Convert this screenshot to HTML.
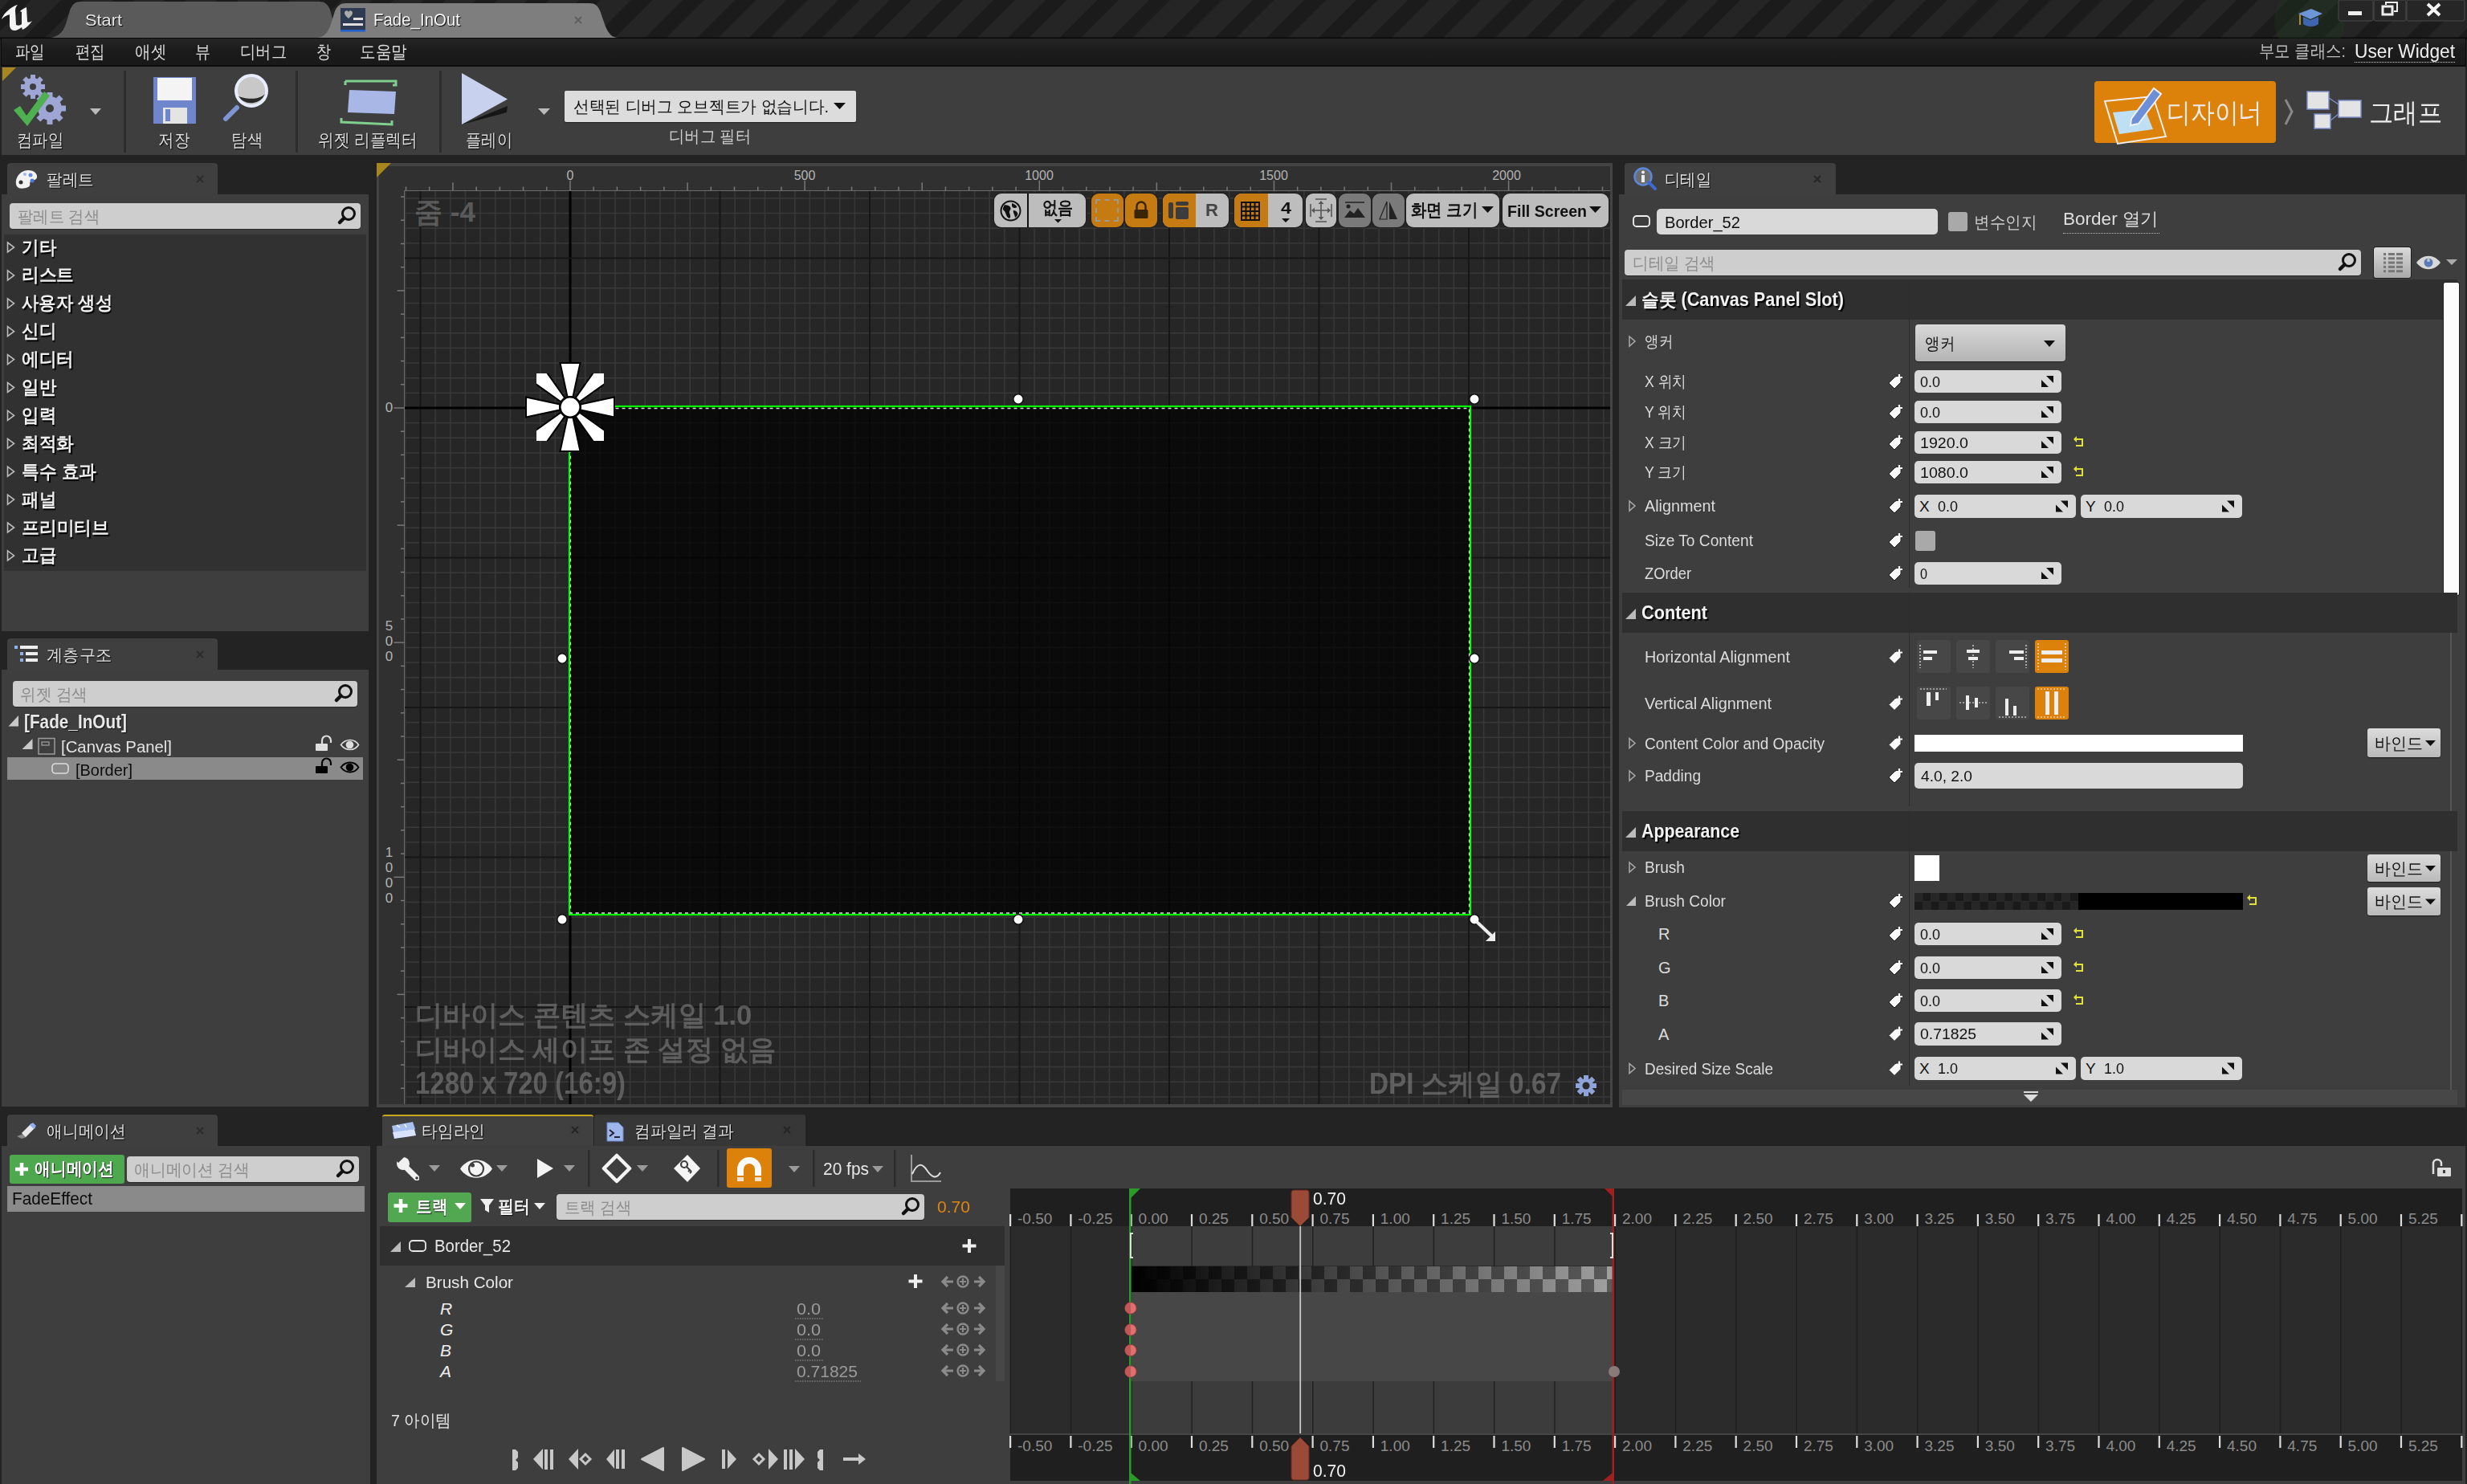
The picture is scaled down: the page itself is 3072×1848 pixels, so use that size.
<!DOCTYPE html><html><head><meta charset="utf-8"><style>
*{margin:0;padding:0;box-sizing:border-box}
html,body{width:3072px;height:1848px;overflow:hidden;background:#232323;font-family:"Liberation Sans",sans-serif}
body>div{position:absolute}
.t{position:absolute;white-space:nowrap}
svg{position:absolute;overflow:visible}
</style></head><body>
<svg style="left:0;top:0" width="3072" height="48"><defs><pattern id="st" width="45.6" height="60" patternUnits="userSpaceOnUse" patternTransform="translate(12 0) rotate(45)"><rect width="45.6" height="60" fill="#252525"/><rect width="19" height="60" fill="#1b1b1b"/></pattern></defs><rect width="3072" height="48" fill="url(#st)"/><rect y="46.5" width="3072" height="2" fill="#080808"/></svg>
<svg style="left:0;top:0" width="3072" height="48"><circle cx="2876" cy="26" r="44" fill="#1f3a1f" opacity="0.35"/><path d="M62 47C72 46 78 41 82 30L87 13C90 5 94 2 101 2L398 2C404 2 408 5 411 12L420 47Z" fill="#5a5a5a"/><path d="M394 47C402 47 407 42 411 33L417 14C420 7 424 4 431 4L734 4C741 4 744 7 747 13L754 33C758 42 762 47 770 47Z" fill="#7e7e7e"/><path d="M17 8C10 12 4 18 2 24C6 20 9 19 12 18L12 31C12 35 14 38 18 38C21 38 24 36 27 34L28 37C32 35 37 31 40 26C37 28 35 28 34 27L33 9C30 10 27 12 25 14L27 15L27 30C25 32 22 32 20 31L19 13C19 10 20 8 22 6C20 6 19 7 17 8Z" fill="#f4f4f4"/><rect x="424" y="10" width="31" height="29" fill="#2d3a52"/><rect x="424" y="37" width="31" height="2.5" fill="#1f5fd0"/><path d="M429 16c0-3 4-4 5-1c1-3 5-2 5 1c0 3-3 5-5 7c-2-2-5-4-5-7z" fill="#aaa"/><rect x="440" y="22" width="12" height="3" fill="#ddd"/><rect x="427" y="29" width="25" height="3" fill="#ddd"/><path d="M716 21l8 8M724 21l-8 8" stroke="#606060" stroke-width="2"/><path d="M2862 17l16-6 14 6-15 7z" fill="#6d95d8"/><path d="M2868 21v9c5 4 14 4 19 0v-9l-10 4z" fill="#3e66b0"/><path d="M2864 18v13" stroke="#d9a441" stroke-width="1.5"/><rect x="2912" y="0" width="43" height="26" rx="2" fill="#262626" stroke="#4a4a4a"/><rect x="2924" y="14" width="17" height="5" fill="#eee"/><rect x="2956" y="0" width="40" height="26" rx="2" fill="#262626" stroke="#4a4a4a"/><rect x="2967" y="8" width="12" height="10" fill="none" stroke="#eee" stroke-width="3"/><path d="M2971 6V3h14v11h-4" fill="none" stroke="#eee" stroke-width="2"/><rect x="2997" y="0" width="72" height="26" rx="2" fill="#262626" stroke="#4a4a4a"/><path d="M3023 5l15 14M3038 5l-15 14" stroke="#f4f4f4" stroke-width="4"/></svg>
<div id="t1" class="t" style="left:106px;top:13.5px;height:21px;line-height:21px;font-size:21px;color:#e6e6e6;font-weight:normal;transform:scaleX(1.0370);transform-origin:0 50%;text-shadow:1px 1px 1px #000">Start</div>
<div id="t2" class="t" style="left:465px;top:14.0px;height:22px;line-height:22px;font-size:22px;color:#f4f4f4;font-weight:normal;transform:scaleX(0.9295);transform-origin:0 50%;text-shadow:1px 1px 1px #000">Fade_InOut</div>
<div style="left:1px;top:48px;width:3070px;height:35px;background:linear-gradient(#252525,#1b1b1b 45%,#191919);border:1px solid #0c0c0c;border-top:0;border-bottom:2px solid #0c0c0c"></div>
<div id="t3" class="t" style="left:19px;top:54.0px;height:22px;line-height:22px;font-size:22px;color:#dcdcdc;font-weight:normal;transform:scaleX(0.8409);transform-origin:0 50%;">파일</div>
<div id="t4" class="t" style="left:94px;top:54.0px;height:22px;line-height:22px;font-size:22px;color:#dcdcdc;font-weight:normal;transform:scaleX(0.8409);transform-origin:0 50%;">편집</div>
<div id="t5" class="t" style="left:168px;top:54.0px;height:22px;line-height:22px;font-size:22px;color:#dcdcdc;font-weight:normal;transform:scaleX(0.8864);transform-origin:0 50%;">애셋</div>
<div id="t6" class="t" style="left:243px;top:54.0px;height:22px;line-height:22px;font-size:22px;color:#dcdcdc;font-weight:normal;transform:scaleX(0.8636);transform-origin:0 50%;">뷰</div>
<div id="t7" class="t" style="left:299px;top:54.0px;height:22px;line-height:22px;font-size:22px;color:#dcdcdc;font-weight:normal;transform:scaleX(0.8788);transform-origin:0 50%;">디버그</div>
<div id="t8" class="t" style="left:394px;top:54.0px;height:22px;line-height:22px;font-size:22px;color:#dcdcdc;font-weight:normal;transform:scaleX(0.8182);transform-origin:0 50%;">창</div>
<div id="t9" class="t" style="left:448px;top:54.0px;height:22px;line-height:22px;font-size:22px;color:#dcdcdc;font-weight:normal;transform:scaleX(0.8939);transform-origin:0 50%;">도움말</div>
<div id="t10" class="t" style="left:2813px;top:53.0px;height:22px;line-height:22px;font-size:22px;color:#bdbdbd;font-weight:normal;transform:scaleX(0.8835);transform-origin:0 50%;">부모 클래스:</div>
<div id="t11" class="t" style="left:2932px;top:52.5px;height:23px;line-height:23px;font-size:23px;color:#f0f0f0;font-weight:normal;transform:scaleX(0.9878);transform-origin:0 50%;">User Widget</div>
<div style="left:2932px;top:77px;width:125px;height:0;border-top:1.5px dotted #ccc"></div>
<div style="left:2px;top:83px;width:3068px;height:110px;background:#3e3e3e"></div>
<svg style="left:0;top:0" width="1" height="1"><path d="M3 84h17l-17 17z" fill="#a8861e"/><rect x="154" y="88" width="3" height="102" fill="#2c2c2c"/><rect x="368" y="88" width="3" height="102" fill="#2c2c2c"/><rect x="547" y="88" width="3" height="102" fill="#2c2c2c"/><g fill="#9ea6d6"><circle cx="41" cy="108" r="11"/><rect x="38" y="93" width="6" height="6" transform="rotate(0 41 108)"/><rect x="38" y="93" width="6" height="6" transform="rotate(45 41 108)"/><rect x="38" y="93" width="6" height="6" transform="rotate(90 41 108)"/><rect x="38" y="93" width="6" height="6" transform="rotate(135 41 108)"/><rect x="38" y="93" width="6" height="6" transform="rotate(180 41 108)"/><rect x="38" y="93" width="6" height="6" transform="rotate(225 41 108)"/><rect x="38" y="93" width="6" height="6" transform="rotate(270 41 108)"/><rect x="38" y="93" width="6" height="6" transform="rotate(315 41 108)"/><circle cx="41" cy="108" r="4" fill="#3e3e3e"/><circle cx="62" cy="135" r="15"/><rect x="58.5" y="115" width="7" height="7" transform="rotate(0 62 135)"/><rect x="58.5" y="115" width="7" height="7" transform="rotate(45 62 135)"/><rect x="58.5" y="115" width="7" height="7" transform="rotate(90 62 135)"/><rect x="58.5" y="115" width="7" height="7" transform="rotate(135 62 135)"/><rect x="58.5" y="115" width="7" height="7" transform="rotate(180 62 135)"/><rect x="58.5" y="115" width="7" height="7" transform="rotate(225 62 135)"/><rect x="58.5" y="115" width="7" height="7" transform="rotate(270 62 135)"/><rect x="58.5" y="115" width="7" height="7" transform="rotate(315 62 135)"/><circle cx="62" cy="135" r="5" fill="#3e3e3e"/></g><path d="M17 137l8-5 8 12 22-30 7 5-28 38z" fill="#4fb04f"/><path d="M112 135h14l-7 8z" fill="#bbb"/><path d="M191 96h53v58h-53z" fill="#6f86cc"/><rect x="196" y="97" width="43" height="28" fill="#f4f4f4"/><rect x="203" y="134" width="30" height="20" fill="#e4e4e4"/><rect x="206" y="136" width="6" height="15" fill="#6f86cc"/><path d="M281 148l14-14" stroke="#7d95d4" stroke-width="6" stroke-linecap="round"/><circle cx="313" cy="113" r="19" fill="#c8c8c8" stroke="#e8ecff" stroke-width="4"/><path d="M297 120a19 19 0 0 0 33 -3c-6 6-18 8-33 3z" fill="#2a2a2a"/><path d="M430 101h63v5h-4M430 101v5" fill="none" stroke="#7fcf8f" stroke-width="3"/><path d="M425 147v5l63 3v-5" fill="none" stroke="#7fcf8f" stroke-width="3"/><path d="M435 112l58 2-2 28-58-2z" fill="#a9b7e6"/><path d="M575 91L632 123.5 575 155z" fill="#c8d2ee"/><path d="M575 155l57-23-1 8z" fill="#161616"/><path d="M670 135h15l-7.5 8z" fill="#bbb"/></svg>
<div id="t12" class="t" style="left:21px;top:164.0px;height:22px;line-height:22px;font-size:22px;color:#dedede;font-weight:normal;transform:scaleX(0.8788);transform-origin:0 50%;text-shadow:1px 1px 1px #000">컴파일</div>
<div id="t13" class="t" style="left:197px;top:164.0px;height:22px;line-height:22px;font-size:22px;color:#dedede;font-weight:normal;transform:scaleX(0.8864);transform-origin:0 50%;text-shadow:1px 1px 1px #000">저장</div>
<div id="t14" class="t" style="left:288px;top:164.0px;height:22px;line-height:22px;font-size:22px;color:#dedede;font-weight:normal;transform:scaleX(0.8864);transform-origin:0 50%;text-shadow:1px 1px 1px #000">탐색</div>
<div id="t15" class="t" style="left:396px;top:164.0px;height:22px;line-height:22px;font-size:22px;color:#dedede;font-weight:normal;transform:scaleX(0.8977);transform-origin:0 50%;text-shadow:1px 1px 1px #000">위젯 리플렉터</div>
<div id="t16" class="t" style="left:580px;top:164.0px;height:22px;line-height:22px;font-size:22px;color:#dedede;font-weight:normal;transform:scaleX(0.8788);transform-origin:0 50%;text-shadow:1px 1px 1px #000">플레이</div>
<div style="left:703px;top:113px;width:363px;height:39px;background:#dcdcdc;border-radius:2px;box-shadow:0 1px 1px #222"></div>
<div id="t17" class="t" style="left:714px;top:121.5px;height:21px;line-height:21px;font-size:21px;color:#111;font-weight:normal;transform:scaleX(0.9399);transform-origin:0 50%;">선택된 디버그 오브젝트가 없습니다.</div>
<svg style="left:1038px;top:128px" width="15" height="9"><path d="M0 0h15L7.5 8z" fill="#111"/></svg>
<div id="t18" class="t" style="left:833px;top:158.5px;height:21px;line-height:21px;font-size:21px;color:#cfcfcf;font-weight:normal;transform:scaleX(0.9202);transform-origin:0 50%;">디버그 필터</div>
<div style="left:2608px;top:101px;width:226px;height:77px;background:#dc820b;border-radius:4px"></div>
<svg style="left:0;top:0" width="1" height="1"><path d="M2621 126l60-6 16 50-60 9z" fill="none" stroke="#eee" stroke-width="2"/><path d="M2631 140l40-4 10 25-42 6z" fill="#bfe0f4"/><path d="M2654 148l28-38 9 7-28 37-10 2z" fill="#6d8fd8" stroke="#f0f0f0" stroke-width="2"/><path d="M2846 124l8 15-8 16" fill="none" stroke="#888" stroke-width="3"/><rect x="2873" y="114" width="27" height="22" fill="#e4e4e4" stroke="#7d8fc8" stroke-width="1.5"/><rect x="2912" y="125" width="28" height="21" fill="#e4e4e4" stroke="#7d8fc8" stroke-width="1.5"/><rect x="2882" y="142" width="20" height="18" fill="#e4e4e4" stroke="#7d8fc8" stroke-width="1.5"/><path d="M2900 122l12 8M2902 150l10-8" stroke="#7d8fc8" stroke-width="1.5"/></svg>
<div id="t19" class="t" style="left:2698px;top:123.0px;height:34px;line-height:34px;font-size:34px;color:#ececec;font-weight:normal;transform:scaleX(0.8750);transform-origin:0 50%;">디자이너</div>
<div id="t20" class="t" style="left:2950px;top:123.0px;height:34px;line-height:34px;font-size:34px;color:#ececec;font-weight:normal;transform:scaleX(0.8922);transform-origin:0 50%;">그래프</div>
<div style="left:9px;top:203px;width:262px;height:39px;background:#3f3f3f;border-radius:4px 4px 0 0"></div>
<svg style="left:18px;top:210px" width="30" height="26"><path d="M3 22C-1 14 6 2 17 2c8 0 12 5 11 9-1 4-6 3-8 5s1 5-3 7c-5 2-11 3-14-1z" fill="#f2f2f2"/><circle cx="20" cy="8" r="2.5" fill="#6a8fe0"/><circle cx="13" cy="7" r="2" fill="#9fb7ef"/><circle cx="22" cy="15" r="2.5" fill="#4a78d8"/><circle cx="8" cy="17" r="2.5" fill="#333"/></svg>
<div id="t21" class="t" style="left:58px;top:212.5px;height:21px;line-height:21px;font-size:21px;color:#e0e0e0;font-weight:normal;transform:scaleX(0.9365);transform-origin:0 50%;text-shadow:1px 1px 1px #000">팔레트</div>
<svg style="left:244px;top:218px" width="10" height="10"><path d="M1 1l8 8M9 1L1 9" stroke="#2c2c2c" stroke-width="2"/></svg>
<div style="left:2px;top:242px;width:457px;height:544px;background:#3e3e3e"></div>
<div style="left:12px;top:253px;width:437px;height:32px;background:#cecece;border-radius:4px;box-shadow:0 1px 0 #2a2a2a"></div>
<div id="t22" class="t" style="left:22px;top:258.5px;height:21px;line-height:21px;font-size:21px;color:#8d8d8d;font-weight:normal;transform:scaleX(0.9202);transform-origin:0 50%;">팔레트 검색</div>
<svg style="left:419px;top:256.0px" width="26" height="26"><circle cx="15" cy="10" r="7.5" fill="none" stroke="#111" stroke-width="3"/><path d="M9.5 15.5L4 21" stroke="#111" stroke-width="4.5" stroke-linecap="round"/></svg>
<div style="left:5px;top:292px;width:451px;height:419px;background:#313131"></div>
<div id="t23" class="t" style="left:27px;top:296.5px;height:23px;line-height:23px;font-size:23px;color:#f0f0f0;font-weight:bold;transform:scaleX(0.9348);transform-origin:0 50%;text-shadow:2px 2px 1px #000">기타</div>
<div id="t24" class="t" style="left:27px;top:331.4px;height:23px;line-height:23px;font-size:23px;color:#f0f0f0;font-weight:bold;transform:scaleX(0.9420);transform-origin:0 50%;text-shadow:2px 2px 1px #000">리스트</div>
<div id="t25" class="t" style="left:27px;top:366.3px;height:23px;line-height:23px;font-size:23px;color:#f0f0f0;font-weight:bold;transform:scaleX(0.9309);transform-origin:0 50%;text-shadow:2px 2px 1px #000">사용자 생성</div>
<div id="t26" class="t" style="left:27px;top:401.2px;height:23px;line-height:23px;font-size:23px;color:#f0f0f0;font-weight:bold;transform:scaleX(0.9348);transform-origin:0 50%;text-shadow:2px 2px 1px #000">신디</div>
<div id="t27" class="t" style="left:27px;top:436.1px;height:23px;line-height:23px;font-size:23px;color:#f0f0f0;font-weight:bold;transform:scaleX(0.9420);transform-origin:0 50%;text-shadow:2px 2px 1px #000">에디터</div>
<div id="t28" class="t" style="left:27px;top:471.0px;height:23px;line-height:23px;font-size:23px;color:#f0f0f0;font-weight:bold;transform:scaleX(0.9348);transform-origin:0 50%;text-shadow:2px 2px 1px #000">일반</div>
<div id="t29" class="t" style="left:27px;top:505.9px;height:23px;line-height:23px;font-size:23px;color:#f0f0f0;font-weight:bold;transform:scaleX(0.9348);transform-origin:0 50%;text-shadow:2px 2px 1px #000">입력</div>
<div id="t30" class="t" style="left:27px;top:540.8px;height:23px;line-height:23px;font-size:23px;color:#f0f0f0;font-weight:bold;transform:scaleX(0.9420);transform-origin:0 50%;text-shadow:2px 2px 1px #000">최적화</div>
<div id="t31" class="t" style="left:27px;top:575.7px;height:23px;line-height:23px;font-size:23px;color:#f0f0f0;font-weight:bold;transform:scaleX(0.9452);transform-origin:0 50%;text-shadow:2px 2px 1px #000">특수 효과</div>
<div id="t32" class="t" style="left:27px;top:610.6px;height:23px;line-height:23px;font-size:23px;color:#f0f0f0;font-weight:bold;transform:scaleX(0.9348);transform-origin:0 50%;text-shadow:2px 2px 1px #000">패널</div>
<div id="t33" class="t" style="left:27px;top:645.5px;height:23px;line-height:23px;font-size:23px;color:#f0f0f0;font-weight:bold;transform:scaleX(0.9478);transform-origin:0 50%;text-shadow:2px 2px 1px #000">프리미티브</div>
<div id="t34" class="t" style="left:27px;top:680.4px;height:23px;line-height:23px;font-size:23px;color:#f0f0f0;font-weight:bold;transform:scaleX(0.9348);transform-origin:0 50%;text-shadow:2px 2px 1px #000">고급</div>
<svg style="left:0;top:0" width="1" height="1"><path d="M9.5 302.0L17.5 308.0L9.5 314.0Z" fill="none" stroke="#bbb" stroke-width="1.6"/><path d="M9.5 336.9L17.5 342.9L9.5 348.9Z" fill="none" stroke="#bbb" stroke-width="1.6"/><path d="M9.5 371.8L17.5 377.8L9.5 383.8Z" fill="none" stroke="#bbb" stroke-width="1.6"/><path d="M9.5 406.7L17.5 412.7L9.5 418.7Z" fill="none" stroke="#bbb" stroke-width="1.6"/><path d="M9.5 441.6L17.5 447.6L9.5 453.6Z" fill="none" stroke="#bbb" stroke-width="1.6"/><path d="M9.5 476.5L17.5 482.5L9.5 488.5Z" fill="none" stroke="#bbb" stroke-width="1.6"/><path d="M9.5 511.4L17.5 517.4L9.5 523.4Z" fill="none" stroke="#bbb" stroke-width="1.6"/><path d="M9.5 546.3L17.5 552.3L9.5 558.3Z" fill="none" stroke="#bbb" stroke-width="1.6"/><path d="M9.5 581.2L17.5 587.2L9.5 593.2Z" fill="none" stroke="#bbb" stroke-width="1.6"/><path d="M9.5 616.1L17.5 622.1L9.5 628.1Z" fill="none" stroke="#bbb" stroke-width="1.6"/><path d="M9.5 651.0L17.5 657.0L9.5 663.0Z" fill="none" stroke="#bbb" stroke-width="1.6"/><path d="M9.5 685.9L17.5 691.9L9.5 697.9Z" fill="none" stroke="#bbb" stroke-width="1.6"/></svg>
<div style="left:9px;top:795px;width:262px;height:39px;background:#3f3f3f;border-radius:4px 4px 0 0"></div>
<svg style="left:18px;top:804px" width="30" height="22"><rect x="0" y="0" width="4" height="4" fill="#8fb0f0"/><rect x="7" y="0" width="22" height="4" fill="#eee"/><rect x="7" y="8" width="4" height="4" fill="#8fb0f0"/><rect x="14" y="8" width="15" height="4" fill="#eee"/><rect x="7" y="16" width="4" height="4" fill="#8fb0f0"/><rect x="14" y="16" width="15" height="4" fill="#eee"/></svg>
<div id="t35" class="t" style="left:58px;top:804.5px;height:21px;line-height:21px;font-size:21px;color:#e0e0e0;font-weight:normal;transform:scaleX(0.9643);transform-origin:0 50%;text-shadow:1px 1px 1px #000">계층구조</div>
<svg style="left:244px;top:810px" width="10" height="10"><path d="M1 1l8 8M9 1L1 9" stroke="#2c2c2c" stroke-width="2"/></svg>
<div style="left:2px;top:834px;width:457px;height:544px;background:#3e3e3e"></div>
<div style="left:16px;top:848px;width:429px;height:32px;background:#cecece;border-radius:4px;box-shadow:0 1px 0 #2a2a2a"></div>
<div id="t36" class="t" style="left:25px;top:853.5px;height:21px;line-height:21px;font-size:21px;color:#8d8d8d;font-weight:normal;transform:scaleX(0.9350);transform-origin:0 50%;">위젯 검색</div>
<svg style="left:415px;top:851.0px" width="26" height="26"><circle cx="15" cy="10" r="7.5" fill="none" stroke="#111" stroke-width="3"/><path d="M9.5 15.5L4 21" stroke="#111" stroke-width="4.5" stroke-linecap="round"/></svg>
<div style="left:9px;top:943px;width:443px;height:28px;background:#8a8a8a"></div>
<svg style="left:0;top:0" width="1" height="1"><path d="M10.5 904.5L23 891V904.5Z" fill="#c8c8c8"/><path d="M27.5 933L40.5 920V933Z" fill="#c8c8c8"/><rect x="48" y="919.5" width="20" height="19.5" fill="none" stroke="#9a9a9a" stroke-width="1.5"/><rect x="52" y="924" width="9" height="4" fill="none" stroke="#9a9a9a" stroke-width="1.3"/><rect x="65" y="951" width="20" height="12" rx="4" fill="none" stroke="#dcdcdc" stroke-width="1.6"/><rect x="393" y="926" width="15" height="9" rx="1" fill="#dedede"/><path d="M401 926v-4a5.5 5.5 0 0 1 11 0v3" fill="none" stroke="#dedede" stroke-width="2.2"/><path d="M424.5 927.5c6-8 17-8 22 0c-5 8-16 8-22 0z" fill="none" stroke="#dedede" stroke-width="1.6"/><circle cx="435.5" cy="927.5" r="4.8" fill="#dedede"/><rect x="393" y="954" width="15" height="9" rx="1" fill="#000"/><path d="M401 954v-4a5.5 5.5 0 0 1 11 0v3" fill="none" stroke="#000" stroke-width="2.2"/><path d="M424.5 955.5c6-8 17-8 22 0c-5 8-16 8-22 0z" fill="none" stroke="#000" stroke-width="1.8"/><circle cx="435.5" cy="955.5" r="4.8" fill="#000"/></svg>
<div id="t37" class="t" style="left:30px;top:887.5px;height:23px;line-height:23px;font-size:23px;color:#e8e8e8;font-weight:bold;transform:scaleX(0.9024);transform-origin:0 50%;text-shadow:1px 1px 1px #111">[Fade_InOut]</div>
<div id="t38" class="t" style="left:76px;top:918.5px;height:21px;line-height:21px;font-size:21px;color:#e4e4e4;font-weight:normal;transform:scaleX(0.9690);transform-origin:0 50%;">[Canvas Panel]</div>
<div id="t39" class="t" style="left:94px;top:947.5px;height:21px;line-height:21px;font-size:21px;color:#0c0c0c;font-weight:normal;transform:scaleX(0.9504);transform-origin:0 50%;">[Border]</div>
<div style="left:9px;top:1388px;width:262px;height:39px;background:#3f3f3f;border-radius:4px 4px 0 0"></div>
<svg style="left:18px;top:1396px" width="30" height="24"><path d="M3 19l8-3 4 4-6 2z" fill="#888"/><path d="M9 15l12-12 5 5-12 12z" fill="#e8e8e8"/><path d="M19 5l4-3 4 4-3 4z" fill="#8fb0f0"/></svg>
<div id="t40" class="t" style="left:58px;top:1397.5px;height:21px;line-height:21px;font-size:21px;color:#e0e0e0;font-weight:normal;transform:scaleX(0.9429);transform-origin:0 50%;text-shadow:1px 1px 1px #000">애니메이션</div>
<svg style="left:244px;top:1403px" width="10" height="10"><path d="M1 1l8 8M9 1L1 9" stroke="#2c2c2c" stroke-width="2"/></svg>
<div style="left:2px;top:1427px;width:459px;height:421px;background:#3e3e3e"></div>
<div style="left:12px;top:1438px;width:143px;height:36px;background:#4ea84e;border-radius:3px"></div>
<svg style="left:18px;top:1447px" width="18" height="18"><path d="M9 1v16M1 9h16" stroke="#fff" stroke-width="4.5"/></svg>
<div id="t41" class="t" style="left:43px;top:1445.0px;height:22px;line-height:22px;font-size:22px;color:#fff;font-weight:bold;transform:scaleX(0.9000);transform-origin:0 50%;text-shadow:1px 1px 1px #222">애니메이션</div>
<div style="left:158px;top:1440px;width:289px;height:32px;background:#cecece;border-radius:4px;box-shadow:0 1px 0 #2a2a2a"></div>
<div id="t42" class="t" style="left:167px;top:1445.5px;height:21px;line-height:21px;font-size:21px;color:#8d8d8d;font-weight:normal;transform:scaleX(0.9421);transform-origin:0 50%;">애니메이션 검색</div>
<svg style="left:417px;top:1443.0px" width="26" height="26"><circle cx="15" cy="10" r="7.5" fill="none" stroke="#111" stroke-width="3"/><path d="M9.5 15.5L4 21" stroke="#111" stroke-width="4.5" stroke-linecap="round"/></svg>
<div style="left:9px;top:1477px;width:445px;height:32px;background:#8a8a8a"></div>
<div id="t43" class="t" style="left:15px;top:1482.0px;height:22px;line-height:22px;font-size:22px;color:#0c0c0c;font-weight:normal;transform:scaleX(0.9434);transform-origin:0 50%;">FadeEffect</div>
<div style="left:469px;top:203px;width:1539px;height:1176px;background:#444"></div>
<div style="left:472px;top:207px;width:1533px;height:1168px;background:#303030"></div>
<svg style="left:504px;top:237px" width="1501" height="1138" viewBox="504 237 1501 1138"><rect x="504" y="237" width="1501" height="1138" fill="#262626"/><rect x="504.05" y="237" width="1.6" height="1138" fill="#383838"/><rect x="541.35" y="237" width="1.6" height="1138" fill="#383838"/><rect x="560.00" y="237" width="1.6" height="1138" fill="#383838"/><rect x="578.65" y="237" width="1.6" height="1138" fill="#383838"/><rect x="597.30" y="237" width="1.6" height="1138" fill="#383838"/><rect x="615.95" y="237" width="1.6" height="1138" fill="#383838"/><rect x="634.60" y="237" width="1.6" height="1138" fill="#383838"/><rect x="653.25" y="237" width="1.6" height="1138" fill="#383838"/><rect x="671.90" y="237" width="1.6" height="1138" fill="#383838"/><rect x="690.55" y="237" width="1.6" height="1138" fill="#383838"/><rect x="727.85" y="237" width="1.6" height="1138" fill="#383838"/><rect x="746.50" y="237" width="1.6" height="1138" fill="#383838"/><rect x="765.15" y="237" width="1.6" height="1138" fill="#383838"/><rect x="783.80" y="237" width="1.6" height="1138" fill="#383838"/><rect x="802.45" y="237" width="1.6" height="1138" fill="#383838"/><rect x="821.10" y="237" width="1.6" height="1138" fill="#383838"/><rect x="839.75" y="237" width="1.6" height="1138" fill="#383838"/><rect x="858.40" y="237" width="1.6" height="1138" fill="#383838"/><rect x="877.05" y="237" width="1.6" height="1138" fill="#383838"/><rect x="914.35" y="237" width="1.6" height="1138" fill="#383838"/><rect x="933.00" y="237" width="1.6" height="1138" fill="#383838"/><rect x="951.65" y="237" width="1.6" height="1138" fill="#383838"/><rect x="970.30" y="237" width="1.6" height="1138" fill="#383838"/><rect x="988.95" y="237" width="1.6" height="1138" fill="#383838"/><rect x="1007.60" y="237" width="1.6" height="1138" fill="#383838"/><rect x="1026.25" y="237" width="1.6" height="1138" fill="#383838"/><rect x="1044.90" y="237" width="1.6" height="1138" fill="#383838"/><rect x="1063.55" y="237" width="1.6" height="1138" fill="#383838"/><rect x="1100.85" y="237" width="1.6" height="1138" fill="#383838"/><rect x="1119.50" y="237" width="1.6" height="1138" fill="#383838"/><rect x="1138.15" y="237" width="1.6" height="1138" fill="#383838"/><rect x="1156.80" y="237" width="1.6" height="1138" fill="#383838"/><rect x="1175.45" y="237" width="1.6" height="1138" fill="#383838"/><rect x="1194.10" y="237" width="1.6" height="1138" fill="#383838"/><rect x="1212.75" y="237" width="1.6" height="1138" fill="#383838"/><rect x="1231.40" y="237" width="1.6" height="1138" fill="#383838"/><rect x="1250.05" y="237" width="1.6" height="1138" fill="#383838"/><rect x="1287.35" y="237" width="1.6" height="1138" fill="#383838"/><rect x="1306.00" y="237" width="1.6" height="1138" fill="#383838"/><rect x="1324.65" y="237" width="1.6" height="1138" fill="#383838"/><rect x="1343.30" y="237" width="1.6" height="1138" fill="#383838"/><rect x="1361.95" y="237" width="1.6" height="1138" fill="#383838"/><rect x="1380.60" y="237" width="1.6" height="1138" fill="#383838"/><rect x="1399.25" y="237" width="1.6" height="1138" fill="#383838"/><rect x="1417.90" y="237" width="1.6" height="1138" fill="#383838"/><rect x="1436.55" y="237" width="1.6" height="1138" fill="#383838"/><rect x="1473.85" y="237" width="1.6" height="1138" fill="#383838"/><rect x="1492.50" y="237" width="1.6" height="1138" fill="#383838"/><rect x="1511.15" y="237" width="1.6" height="1138" fill="#383838"/><rect x="1529.80" y="237" width="1.6" height="1138" fill="#383838"/><rect x="1548.45" y="237" width="1.6" height="1138" fill="#383838"/><rect x="1567.10" y="237" width="1.6" height="1138" fill="#383838"/><rect x="1585.75" y="237" width="1.6" height="1138" fill="#383838"/><rect x="1604.40" y="237" width="1.6" height="1138" fill="#383838"/><rect x="1623.05" y="237" width="1.6" height="1138" fill="#383838"/><rect x="1660.35" y="237" width="1.6" height="1138" fill="#383838"/><rect x="1679.00" y="237" width="1.6" height="1138" fill="#383838"/><rect x="1697.65" y="237" width="1.6" height="1138" fill="#383838"/><rect x="1716.30" y="237" width="1.6" height="1138" fill="#383838"/><rect x="1734.95" y="237" width="1.6" height="1138" fill="#383838"/><rect x="1753.60" y="237" width="1.6" height="1138" fill="#383838"/><rect x="1772.25" y="237" width="1.6" height="1138" fill="#383838"/><rect x="1790.90" y="237" width="1.6" height="1138" fill="#383838"/><rect x="1809.55" y="237" width="1.6" height="1138" fill="#383838"/><rect x="1846.85" y="237" width="1.6" height="1138" fill="#383838"/><rect x="1865.50" y="237" width="1.6" height="1138" fill="#383838"/><rect x="1884.15" y="237" width="1.6" height="1138" fill="#383838"/><rect x="1902.80" y="237" width="1.6" height="1138" fill="#383838"/><rect x="1921.45" y="237" width="1.6" height="1138" fill="#383838"/><rect x="1940.10" y="237" width="1.6" height="1138" fill="#383838"/><rect x="1958.75" y="237" width="1.6" height="1138" fill="#383838"/><rect x="1977.40" y="237" width="1.6" height="1138" fill="#383838"/><rect x="1996.05" y="237" width="1.6" height="1138" fill="#383838"/><rect x="504" y="246.10" width="1501" height="1.6" fill="#383838"/><rect x="504" y="264.75" width="1501" height="1.6" fill="#383838"/><rect x="504" y="283.40" width="1501" height="1.6" fill="#383838"/><rect x="504" y="302.05" width="1501" height="1.6" fill="#383838"/><rect x="504" y="339.35" width="1501" height="1.6" fill="#383838"/><rect x="504" y="358.00" width="1501" height="1.6" fill="#383838"/><rect x="504" y="376.65" width="1501" height="1.6" fill="#383838"/><rect x="504" y="395.30" width="1501" height="1.6" fill="#383838"/><rect x="504" y="413.95" width="1501" height="1.6" fill="#383838"/><rect x="504" y="432.60" width="1501" height="1.6" fill="#383838"/><rect x="504" y="451.25" width="1501" height="1.6" fill="#383838"/><rect x="504" y="469.90" width="1501" height="1.6" fill="#383838"/><rect x="504" y="488.55" width="1501" height="1.6" fill="#383838"/><rect x="504" y="525.85" width="1501" height="1.6" fill="#383838"/><rect x="504" y="544.50" width="1501" height="1.6" fill="#383838"/><rect x="504" y="563.15" width="1501" height="1.6" fill="#383838"/><rect x="504" y="581.80" width="1501" height="1.6" fill="#383838"/><rect x="504" y="600.45" width="1501" height="1.6" fill="#383838"/><rect x="504" y="619.10" width="1501" height="1.6" fill="#383838"/><rect x="504" y="637.75" width="1501" height="1.6" fill="#383838"/><rect x="504" y="656.40" width="1501" height="1.6" fill="#383838"/><rect x="504" y="675.05" width="1501" height="1.6" fill="#383838"/><rect x="504" y="712.35" width="1501" height="1.6" fill="#383838"/><rect x="504" y="731.00" width="1501" height="1.6" fill="#383838"/><rect x="504" y="749.65" width="1501" height="1.6" fill="#383838"/><rect x="504" y="768.30" width="1501" height="1.6" fill="#383838"/><rect x="504" y="786.95" width="1501" height="1.6" fill="#383838"/><rect x="504" y="805.60" width="1501" height="1.6" fill="#383838"/><rect x="504" y="824.25" width="1501" height="1.6" fill="#383838"/><rect x="504" y="842.90" width="1501" height="1.6" fill="#383838"/><rect x="504" y="861.55" width="1501" height="1.6" fill="#383838"/><rect x="504" y="898.85" width="1501" height="1.6" fill="#383838"/><rect x="504" y="917.50" width="1501" height="1.6" fill="#383838"/><rect x="504" y="936.15" width="1501" height="1.6" fill="#383838"/><rect x="504" y="954.80" width="1501" height="1.6" fill="#383838"/><rect x="504" y="973.45" width="1501" height="1.6" fill="#383838"/><rect x="504" y="992.10" width="1501" height="1.6" fill="#383838"/><rect x="504" y="1010.75" width="1501" height="1.6" fill="#383838"/><rect x="504" y="1029.40" width="1501" height="1.6" fill="#383838"/><rect x="504" y="1048.05" width="1501" height="1.6" fill="#383838"/><rect x="504" y="1085.35" width="1501" height="1.6" fill="#383838"/><rect x="504" y="1104.00" width="1501" height="1.6" fill="#383838"/><rect x="504" y="1122.65" width="1501" height="1.6" fill="#383838"/><rect x="504" y="1141.30" width="1501" height="1.6" fill="#383838"/><rect x="504" y="1159.95" width="1501" height="1.6" fill="#383838"/><rect x="504" y="1178.60" width="1501" height="1.6" fill="#383838"/><rect x="504" y="1197.25" width="1501" height="1.6" fill="#383838"/><rect x="504" y="1215.90" width="1501" height="1.6" fill="#383838"/><rect x="504" y="1234.55" width="1501" height="1.6" fill="#383838"/><rect x="504" y="1271.85" width="1501" height="1.6" fill="#383838"/><rect x="504" y="1290.50" width="1501" height="1.6" fill="#383838"/><rect x="504" y="1309.15" width="1501" height="1.6" fill="#383838"/><rect x="504" y="1327.80" width="1501" height="1.6" fill="#383838"/><rect x="504" y="1346.45" width="1501" height="1.6" fill="#383838"/><rect x="504" y="1365.10" width="1501" height="1.6" fill="#383838"/><rect x="522.50" y="237" width="2" height="1138" fill="#161616"/><rect x="708.50" y="237" width="3" height="1138" fill="#000"/><rect x="895.50" y="237" width="2" height="1138" fill="#161616"/><rect x="1082.00" y="237" width="2" height="1138" fill="#161616"/><rect x="1268.50" y="237" width="2" height="1138" fill="#161616"/><rect x="1455.00" y="237" width="2" height="1138" fill="#161616"/><rect x="1641.50" y="237" width="2" height="1138" fill="#161616"/><rect x="1828.00" y="237" width="2" height="1138" fill="#161616"/><rect x="504" y="320.50" width="1501" height="2" fill="#161616"/><rect x="504" y="506.50" width="1501" height="3" fill="#000"/><rect x="504" y="693.50" width="1501" height="2" fill="#161616"/><rect x="504" y="880.00" width="1501" height="2" fill="#161616"/><rect x="504" y="1066.50" width="1501" height="2" fill="#161616"/><rect x="504" y="1253.00" width="1501" height="2" fill="#161616"/><rect x="710" y="508" width="1121" height="630" fill="rgba(0,0,0,0.72)"/><rect x="709" y="506" width="1122" height="633" fill="none" stroke="#00ff00" stroke-width="2.2"/><rect x="710.5" y="508.5" width="1119" height="628.5" fill="none" stroke="#ddd" stroke-width="1.3" stroke-dasharray="4 4"/></svg>
<svg style="left:472px;top:207px" width="1533" height="1168" viewBox="472 207 1533 1168"><rect x="503" y="237" width="1502" height="1" fill="#6a6a6a"/><rect x="503" y="237" width="1" height="1138" fill="#6a6a6a"/><rect x="504.75" y="232.50" width="1.5" height="4.5" fill="#777"/><rect x="533.96" y="232.50" width="1.5" height="4.5" fill="#777"/><rect x="563.17" y="227.30" width="1.5" height="9.7" fill="#777"/><rect x="592.39" y="232.50" width="1.5" height="4.5" fill="#777"/><rect x="621.61" y="232.50" width="1.5" height="4.5" fill="#777"/><rect x="650.82" y="232.50" width="1.5" height="4.5" fill="#777"/><rect x="680.03" y="232.50" width="1.5" height="4.5" fill="#777"/><rect x="709.25" y="224.70" width="1.5" height="12.3" fill="#777"/><rect x="738.47" y="232.50" width="1.5" height="4.5" fill="#777"/><rect x="767.68" y="232.50" width="1.5" height="4.5" fill="#777"/><rect x="796.89" y="232.50" width="1.5" height="4.5" fill="#777"/><rect x="826.11" y="232.50" width="1.5" height="4.5" fill="#777"/><rect x="855.33" y="227.30" width="1.5" height="9.7" fill="#777"/><rect x="884.54" y="232.50" width="1.5" height="4.5" fill="#777"/><rect x="913.75" y="232.50" width="1.5" height="4.5" fill="#777"/><rect x="942.97" y="232.50" width="1.5" height="4.5" fill="#777"/><rect x="972.18" y="232.50" width="1.5" height="4.5" fill="#777"/><rect x="1001.40" y="224.70" width="1.5" height="12.3" fill="#777"/><rect x="1030.62" y="232.50" width="1.5" height="4.5" fill="#777"/><rect x="1059.83" y="232.50" width="1.5" height="4.5" fill="#777"/><rect x="1089.05" y="232.50" width="1.5" height="4.5" fill="#777"/><rect x="1118.26" y="232.50" width="1.5" height="4.5" fill="#777"/><rect x="1147.47" y="227.30" width="1.5" height="9.7" fill="#777"/><rect x="1176.69" y="232.50" width="1.5" height="4.5" fill="#777"/><rect x="1205.90" y="232.50" width="1.5" height="4.5" fill="#777"/><rect x="1235.12" y="232.50" width="1.5" height="4.5" fill="#777"/><rect x="1264.34" y="232.50" width="1.5" height="4.5" fill="#777"/><rect x="1293.55" y="224.70" width="1.5" height="12.3" fill="#777"/><rect x="1322.76" y="232.50" width="1.5" height="4.5" fill="#777"/><rect x="1351.98" y="232.50" width="1.5" height="4.5" fill="#777"/><rect x="1381.20" y="232.50" width="1.5" height="4.5" fill="#777"/><rect x="1410.41" y="232.50" width="1.5" height="4.5" fill="#777"/><rect x="1439.62" y="227.30" width="1.5" height="9.7" fill="#777"/><rect x="1468.84" y="232.50" width="1.5" height="4.5" fill="#777"/><rect x="1498.05" y="232.50" width="1.5" height="4.5" fill="#777"/><rect x="1527.27" y="232.50" width="1.5" height="4.5" fill="#777"/><rect x="1556.49" y="232.50" width="1.5" height="4.5" fill="#777"/><rect x="1585.70" y="224.70" width="1.5" height="12.3" fill="#777"/><rect x="1614.91" y="232.50" width="1.5" height="4.5" fill="#777"/><rect x="1644.13" y="232.50" width="1.5" height="4.5" fill="#777"/><rect x="1673.35" y="232.50" width="1.5" height="4.5" fill="#777"/><rect x="1702.56" y="232.50" width="1.5" height="4.5" fill="#777"/><rect x="1731.78" y="227.30" width="1.5" height="9.7" fill="#777"/><rect x="1760.99" y="232.50" width="1.5" height="4.5" fill="#777"/><rect x="1790.20" y="232.50" width="1.5" height="4.5" fill="#777"/><rect x="1819.42" y="232.50" width="1.5" height="4.5" fill="#777"/><rect x="1848.63" y="232.50" width="1.5" height="4.5" fill="#777"/><rect x="1877.85" y="224.70" width="1.5" height="12.3" fill="#777"/><rect x="1907.07" y="232.50" width="1.5" height="4.5" fill="#777"/><rect x="1936.28" y="232.50" width="1.5" height="4.5" fill="#777"/><rect x="1965.49" y="232.50" width="1.5" height="4.5" fill="#777"/><rect x="1994.71" y="232.50" width="1.5" height="4.5" fill="#777"/><rect x="499.00" y="244.31" width="5" height="1.5" fill="#777"/><rect x="499.00" y="273.53" width="5" height="1.5" fill="#777"/><rect x="499.00" y="302.75" width="5" height="1.5" fill="#777"/><rect x="499.00" y="331.96" width="5" height="1.5" fill="#777"/><rect x="494.60" y="361.18" width="9.4" height="1.5" fill="#777"/><rect x="499.00" y="390.39" width="5" height="1.5" fill="#777"/><rect x="499.00" y="419.61" width="5" height="1.5" fill="#777"/><rect x="499.00" y="448.82" width="5" height="1.5" fill="#777"/><rect x="499.00" y="478.04" width="5" height="1.5" fill="#777"/><rect x="490.50" y="507.25" width="13.5" height="1.5" fill="#777"/><rect x="499.00" y="536.47" width="5" height="1.5" fill="#777"/><rect x="499.00" y="565.68" width="5" height="1.5" fill="#777"/><rect x="499.00" y="594.89" width="5" height="1.5" fill="#777"/><rect x="499.00" y="624.11" width="5" height="1.5" fill="#777"/><rect x="494.60" y="653.33" width="9.4" height="1.5" fill="#777"/><rect x="499.00" y="682.54" width="5" height="1.5" fill="#777"/><rect x="499.00" y="711.75" width="5" height="1.5" fill="#777"/><rect x="499.00" y="740.97" width="5" height="1.5" fill="#777"/><rect x="499.00" y="770.18" width="5" height="1.5" fill="#777"/><rect x="490.50" y="799.40" width="13.5" height="1.5" fill="#777"/><rect x="499.00" y="828.62" width="5" height="1.5" fill="#777"/><rect x="499.00" y="857.83" width="5" height="1.5" fill="#777"/><rect x="499.00" y="887.05" width="5" height="1.5" fill="#777"/><rect x="499.00" y="916.26" width="5" height="1.5" fill="#777"/><rect x="494.60" y="945.48" width="9.4" height="1.5" fill="#777"/><rect x="499.00" y="974.69" width="5" height="1.5" fill="#777"/><rect x="499.00" y="1003.90" width="5" height="1.5" fill="#777"/><rect x="499.00" y="1033.12" width="5" height="1.5" fill="#777"/><rect x="499.00" y="1062.34" width="5" height="1.5" fill="#777"/><rect x="490.50" y="1091.55" width="13.5" height="1.5" fill="#777"/><rect x="499.00" y="1120.76" width="5" height="1.5" fill="#777"/><rect x="499.00" y="1149.98" width="5" height="1.5" fill="#777"/><rect x="499.00" y="1179.20" width="5" height="1.5" fill="#777"/><rect x="499.00" y="1208.41" width="5" height="1.5" fill="#777"/><rect x="494.60" y="1237.62" width="9.4" height="1.5" fill="#777"/><rect x="499.00" y="1266.84" width="5" height="1.5" fill="#777"/><rect x="499.00" y="1296.05" width="5" height="1.5" fill="#777"/><rect x="499.00" y="1325.27" width="5" height="1.5" fill="#777"/><rect x="499.00" y="1354.49" width="5" height="1.5" fill="#777"/><path d="M469 203h18l-18 18z" fill="#a8861e"/></svg>
<div class="t" style="left:670px;top:211px;width:80px;text-align:center;font-size:16px;line-height:16px;color:#b4b4b4">0</div>
<div class="t" style="left:962px;top:211px;width:80px;text-align:center;font-size:16px;line-height:16px;color:#b4b4b4">500</div>
<div class="t" style="left:1254px;top:211px;width:80px;text-align:center;font-size:16px;line-height:16px;color:#b4b4b4">1000</div>
<div class="t" style="left:1546px;top:211px;width:80px;text-align:center;font-size:16px;line-height:16px;color:#b4b4b4">1500</div>
<div class="t" style="left:1836px;top:211px;width:80px;text-align:center;font-size:16px;line-height:16px;color:#b4b4b4">2000</div>
<div class="t" style="left:474px;top:498.5px;width:21px;height:17px;line-height:17px;text-align:center;font-size:17px;color:#b4b4b4">0</div>
<div class="t" style="left:474px;top:770.5px;width:21px;height:17px;line-height:17px;text-align:center;font-size:17px;color:#b4b4b4">5</div>
<div class="t" style="left:474px;top:789.5px;width:21px;height:17px;line-height:17px;text-align:center;font-size:17px;color:#b4b4b4">0</div>
<div class="t" style="left:474px;top:808.5px;width:21px;height:17px;line-height:17px;text-align:center;font-size:17px;color:#b4b4b4">0</div>
<div class="t" style="left:474px;top:1052.5px;width:21px;height:17px;line-height:17px;text-align:center;font-size:17px;color:#b4b4b4">1</div>
<div class="t" style="left:474px;top:1071.5px;width:21px;height:17px;line-height:17px;text-align:center;font-size:17px;color:#b4b4b4">0</div>
<div class="t" style="left:474px;top:1090.5px;width:21px;height:17px;line-height:17px;text-align:center;font-size:17px;color:#b4b4b4">0</div>
<div class="t" style="left:474px;top:1109.5px;width:21px;height:17px;line-height:17px;text-align:center;font-size:17px;color:#b4b4b4">0</div>
<div id="t44" class="t" style="left:516px;top:245.5px;height:35px;line-height:35px;font-size:35px;color:rgba(130,130,130,0.58);font-weight:bold;">줌 -4</div>
<div id="t45" class="t" style="left:517px;top:1245.5px;height:35px;line-height:35px;font-size:35px;color:rgba(130,130,130,0.6);font-weight:bold;transform:scaleX(0.9794);transform-origin:0 50%;">디바이스 콘텐츠 스케일 1.0</div>
<div id="t46" class="t" style="left:517px;top:1288.5px;height:35px;line-height:35px;font-size:35px;color:rgba(130,130,130,0.6);font-weight:bold;transform:scaleX(0.9784);transform-origin:0 50%;">디바이스 세이프 존 설정 없음</div>
<div id="t47" class="t" style="left:517px;top:1330.0px;height:38px;line-height:38px;font-size:38px;color:rgba(130,130,130,0.6);font-weight:bold;transform:scaleX(0.8672);transform-origin:0 50%;">1280 x 720 (16:9)</div>
<div id="t48" class="t" style="left:1705px;top:1332.0px;height:36px;line-height:36px;font-size:36px;color:rgba(130,130,130,0.6);font-weight:bold;transform:scaleX(0.9260);transform-origin:0 50%;">DPI 스케일 0.67</div>
<svg style="left:0;top:0" width="1" height="1"><defs><clipPath id="fcl"><rect x="-42" y="-42" width="84" height="84"/></clipPath></defs><g transform="translate(710,507)"><polygon points="13.00,-3.50 55.00,-12.50 55.00,12.50 13.00,3.50" fill="#fff" stroke="#000" stroke-width="2"/><polygon clip-path="url(#fcl)" points="11.67,6.72 55.51,37.83 37.83,55.51 6.72,11.67" fill="#fff" stroke="#000" stroke-width="2"/><polygon points="3.50,13.00 12.50,55.00 -12.50,55.00 -3.50,13.00" fill="#fff" stroke="#000" stroke-width="2"/><polygon clip-path="url(#fcl)" points="-6.72,11.67 -37.83,55.51 -55.51,37.83 -11.67,6.72" fill="#fff" stroke="#000" stroke-width="2"/><polygon points="-13.00,3.50 -55.00,12.50 -55.00,-12.50 -13.00,-3.50" fill="#fff" stroke="#000" stroke-width="2"/><polygon clip-path="url(#fcl)" points="-11.67,-6.72 -55.51,-37.83 -37.83,-55.51 -6.72,-11.67" fill="#fff" stroke="#000" stroke-width="2"/><polygon points="-3.50,-13.00 -12.50,-55.00 12.50,-55.00 3.50,-13.00" fill="#fff" stroke="#000" stroke-width="2"/><polygon clip-path="url(#fcl)" points="6.72,-11.67 37.83,-55.51 55.51,-37.83 11.67,-6.72" fill="#fff" stroke="#000" stroke-width="2"/><g clip-path="url(#fcl)"></g><circle r="12.5" fill="#fff" stroke="#000" stroke-width="2.2"/></g><circle cx="700" cy="820" r="6.2" fill="#fafafa" stroke="#111" stroke-width="1.5"/><circle cx="700" cy="1145" r="6.2" fill="#fafafa" stroke="#111" stroke-width="1.5"/><circle cx="1268" cy="497" r="6.2" fill="#fafafa" stroke="#111" stroke-width="1.5"/><circle cx="1268" cy="1145" r="6.2" fill="#fafafa" stroke="#111" stroke-width="1.5"/><circle cx="1836" cy="497" r="6.2" fill="#fafafa" stroke="#111" stroke-width="1.5"/><circle cx="1836" cy="820" r="6.2" fill="#fafafa" stroke="#111" stroke-width="1.5"/><circle cx="1836" cy="1145" r="6.2" fill="#fafafa" stroke="#111" stroke-width="1.5"/><path d="M1839 1148 L1858 1166" stroke="#eee" stroke-width="4"/><path d="M1862 1172 L1850 1172 L1862 1160 Z" fill="#eee"/><g transform="translate(1975,1352)" fill="#8fa3d8"><circle r="9"/><rect x="-3" y="-13" width="6" height="6" transform="rotate(0)"/><rect x="-3" y="-13" width="6" height="6" transform="rotate(45)"/><rect x="-3" y="-13" width="6" height="6" transform="rotate(90)"/><rect x="-3" y="-13" width="6" height="6" transform="rotate(135)"/><rect x="-3" y="-13" width="6" height="6" transform="rotate(180)"/><rect x="-3" y="-13" width="6" height="6" transform="rotate(225)"/><rect x="-3" y="-13" width="6" height="6" transform="rotate(270)"/><rect x="-3" y="-13" width="6" height="6" transform="rotate(315)"/><circle r="4.5" fill="#2a2a2a"/></g></svg>
<div style="left:1238px;top:241px;width:114px;height:42px;background:#bdbdbd;border-radius:9px;box-shadow:0 0 0 1.5px #222;overflow:hidden;"><div style="position:absolute;left:41px;top:0;width:2px;height:42px;background:#111"></div></div>
<svg style="left:1245px;top:249px" width="27" height="27" viewBox="0 0 27 27"><circle cx="13.5" cy="13.5" r="12" fill="#bdbdbd" stroke="#111" stroke-width="2"/><path d="M6 6c3 1 5 0 7 3s-2 4-1 7 2 5 0 7c-3-1-4-4-5-7s-4-3-3-6zM15 4c2 1 5 2 6 4s-2 2-3 2-3-1-3-3zM17 13c2 0 4 1 5 3s-1 5-3 6c0-3-3-6-2-9z" fill="#111"/></svg>
<div id="t49" class="t" style="left:1298px;top:248.0px;height:22px;line-height:22px;font-size:22px;color:#111;font-weight:bold;transform:scaleX(0.8636);transform-origin:0 50%;">없음</div>
<svg style="left:1313px;top:273px" width="9" height="5"><path d="M0 0h9L4.5 4.5z" fill="#111"/></svg>
<div style="left:1359px;top:241px;width:40px;height:42px;background:#c57b12;border-radius:9px;box-shadow:0 0 0 1.5px #222;overflow:hidden;"><div style="position:absolute;left:5px;top:7px;width:29px;height:28px;border:2px dashed #999"></div></div>
<div style="left:1401px;top:241px;width:40px;height:42px;background:#c57b12;border-radius:9px;box-shadow:0 0 0 1.5px #222;overflow:hidden;"><svg style="left:10px;top:9px" width="20" height="24"><path d="M4.5 11V7a5.5 5.5 0 0 1 11 0v4" fill="none" stroke="#3a2606" stroke-width="2.5"/><rect x="1.5" y="11" width="17" height="11" rx="1.5" fill="#3a2606"/></svg></div>
<div style="left:1448px;top:241px;width:82px;height:42px;background:#bdbdbd;border-radius:9px;box-shadow:0 0 0 1.5px #222;overflow:hidden;"><div style="position:absolute;left:0;top:0;width:41px;height:42px;background:#c57b12"></div><svg style="left:7px;top:10px" width="26" height="22"><rect x="0" y="1" width="6" height="20" rx="2" fill="#3c3c3c"/><rect x="9" y="0" width="16" height="5" rx="2" fill="#3c3c3c"/><rect x="9" y="7" width="16" height="15" rx="2" fill="#3c3c3c"/></svg></div>
<div id="t50" class="t" style="left:1501px;top:251.0px;height:22px;line-height:22px;font-size:22px;color:#444;font-weight:bold;transform:scaleX(1.0069);transform-origin:0 50%;">R</div>
<div style="left:1537px;top:241px;width:85px;height:42px;background:#bdbdbd;border-radius:9px;box-shadow:0 0 0 1.5px #222;overflow:hidden;"><div style="position:absolute;left:0;top:0;width:42px;height:42px;background:#c57b12"></div><svg style="left:8px;top:10px" width="24" height="24"><rect x="1" y="1" width="22" height="22" fill="none" stroke="#111" stroke-width="2"/><path d="M6.5 1v22M12 1v22M17.5 1v22M1 6.5h22M1 12h22M1 17.5h22" stroke="#111" stroke-width="2"/></svg></div>
<div id="t51" class="t" style="left:1595px;top:247.5px;height:21px;line-height:21px;font-size:21px;color:#111;font-weight:bold;transform:scaleX(1.1123);transform-origin:0 50%;">4</div>
<svg style="left:1596px;top:272px" width="10" height="6"><path d="M0 0h10L5 5z" fill="#111"/></svg>
<div style="left:1626px;top:241px;width:38px;height:42px;background:#bdbdbd;border-radius:9px;box-shadow:0 0 0 1.5px #222;overflow:hidden;"><svg style="left:4px;top:5px" width="30" height="32" viewBox="0 0 30 32"><path d="M2 8v16M28 8v16M8 2h14M8 30h14" stroke="#555" stroke-width="1.6"/><path d="M15 5v22M4 16h22" stroke="#555" stroke-width="1.6"/><path d="M15 4l-3.5 4h7zM15 28l-3.5-4h7zM3 16l4-3.5v7zM27 16l-4-3.5v7z" fill="#555"/></svg></div>
<div style="left:1667px;top:241px;width:40px;height:42px;background:#7a7a7a;border-radius:9px;box-shadow:0 0 0 1.5px #222;overflow:hidden;"><svg style="left:6px;top:10px" width="28" height="22" viewBox="0 0 28 22"><path d="M2 1h24" stroke="#222" stroke-width="1.5"/><circle cx="6" cy="6" r="2.5" fill="#222"/><path d="M1 20l7-9 5 4 5-7 9 12z" fill="#222"/></svg></div>
<div style="left:1709px;top:241px;width:40px;height:42px;background:#7a7a7a;border-radius:9px;box-shadow:0 0 0 1.5px #222;overflow:hidden;"><svg style="left:6px;top:8px" width="28" height="26" viewBox="0 0 28 26"><path d="M12 2v22H3z" fill="none" stroke="#222" stroke-width="1.2"/><path d="M15 2v22h10z" fill="#222"/></svg></div>
<div style="left:1751px;top:241px;width:116px;height:42px;background:#bdbdbd;border-radius:9px;box-shadow:0 0 0 1.5px #222;overflow:hidden;"></div>
<div id="t52" class="t" style="left:1757px;top:251.0px;height:22px;line-height:22px;font-size:22px;color:#111;font-weight:bold;transform:scaleX(0.8818);transform-origin:0 50%;">화면 크기</div>
<svg style="left:1845px;top:257px" width="15" height="9"><path d="M0 0h15L7.5 8z" fill="#111"/></svg>
<div style="left:1871px;top:241px;width:132px;height:42px;background:#bdbdbd;border-radius:9px;box-shadow:0 0 0 1.5px #222;overflow:hidden;"></div>
<div id="t53" class="t" style="left:1877px;top:251.5px;height:21px;line-height:21px;font-size:21px;color:#111;font-weight:bold;transform:scaleX(0.9320);transform-origin:0 50%;">Fill Screen</div>
<svg style="left:1979px;top:257px" width="15" height="9"><path d="M0 0h15L7.5 8z" fill="#111"/></svg>
<div style="left:2023px;top:203px;width:263px;height:39px;background:#3f3f3f;border-radius:4px 4px 0 0"></div>
<svg style="left:2033px;top:208px" width="32" height="32"><circle cx="13" cy="12" r="10.5" fill="#6d6d6d" stroke="#5d86d8" stroke-width="2.5"/><path d="M20 19l8 8" stroke="#3d6ad0" stroke-width="4" stroke-linecap="round"/><circle cx="13" cy="6.5" r="2" fill="#eee"/><rect x="11" y="10" width="4" height="9" fill="#eee"/></svg>
<div id="t54" class="t" style="left:2073px;top:212.5px;height:21px;line-height:21px;font-size:21px;color:#e4e4e4;font-weight:normal;transform:scaleX(0.9206);transform-origin:0 50%;text-shadow:1px 1px 1px #000">디테일</div>
<svg style="left:2258px;top:218px" width="10" height="10"><path d="M1 1l8 8M9 1L1 9" stroke="#262626" stroke-width="2.2"/></svg>
<div style="left:2016px;top:242px;width:1054px;height:1137px;background:#3e3e3e"></div>
<div style="left:2063px;top:260px;width:350px;height:32px;background:#d9d9d9;border-radius:5px"></div>
<div id="t55" class="t" style="left:2073px;top:265.5px;height:21px;line-height:21px;font-size:21px;color:#0c0c0c;font-weight:normal;transform:scaleX(0.9584);transform-origin:0 50%;">Border_52</div>
<div style="left:2426px;top:264px;width:24px;height:24px;background:#a9a9a9;border-radius:3px"></div>
<div id="t56" class="t" style="left:2458px;top:265.5px;height:21px;line-height:21px;font-size:21px;color:#cfcfcf;font-weight:normal;transform:scaleX(0.9286);transform-origin:0 50%;">변수인지</div>
<div id="t57" class="t" style="left:2569px;top:262.0px;height:22px;line-height:22px;font-size:22px;color:#dedede;font-weight:normal;transform:scaleX(1.0245);transform-origin:0 50%;">Border 열기</div>
<div style="left:2569px;top:290px;width:120px;height:0;border-top:1.5px dotted #bbb"></div>
<div style="left:2023px;top:311px;width:917px;height:32px;background:#cecece;border-radius:4px;box-shadow:0 1px 0 #2a2a2a"></div>
<div id="t58" class="t" style="left:2033px;top:316.5px;height:21px;line-height:21px;font-size:21px;color:#8d8d8d;font-weight:normal;transform:scaleX(0.9292);transform-origin:0 50%;">디테일 검색</div>
<svg style="left:2910px;top:314.0px" width="26" height="26"><circle cx="15" cy="10" r="7.5" fill="none" stroke="#111" stroke-width="3"/><path d="M9.5 15.5L4 21" stroke="#111" stroke-width="4.5" stroke-linecap="round"/></svg>
<div style="left:2956px;top:308px;width:46px;height:38px;background:linear-gradient(#dadada,#a9a9a9);border-radius:3px;box-shadow:0 0 0 1px #1e1e1e"></div>
<div style="left:2020px;top:348px;width:1040px;height:50px;background:#2f2f2f"></div>
<div id="t59" class="t" style="left:2044px;top:361.5px;height:23px;line-height:23px;font-size:23px;color:#f2f2f2;font-weight:bold;transform:scaleX(0.9434);transform-origin:0 50%;text-shadow:2px 2px 1px #000">슬롯 (Canvas Panel Slot)</div>
<div style="left:2376.5px;top:348px;width:1.5px;height:384px;background:#2c2c2c"></div>
<div style="left:3043px;top:352px;width:19px;height:389px;background:#fcfcfc;border-radius:2px;box-shadow:0 0 0 1px #222"></div>
<div style="left:3051px;top:741px;width:1.5px;height:616px;background:#555"></div>
<div id="t60" class="t" style="left:2048px;top:415.0px;height:20px;line-height:20px;font-size:20px;color:#dcdcdc;font-weight:normal;transform:scaleX(0.8750);transform-origin:0 50%;">앵커</div>
<div style="left:2385px;top:404px;width:187px;height:46px;background:linear-gradient(#d9d9d9,#c6c6c6 50%,#b4b4b4);border-radius:4px;box-shadow:0 1px 1px #222"></div>
<div id="t61" class="t" style="left:2397px;top:416.5px;height:21px;line-height:21px;font-size:21px;color:#111;font-weight:normal;transform:scaleX(0.8810);transform-origin:0 50%;">앵커</div>
<div id="t62" class="t" style="left:2048px;top:465.0px;height:20px;line-height:20px;font-size:20px;color:#dcdcdc;font-weight:normal;transform:scaleX(0.8828);transform-origin:0 50%;">X 위치</div>
<div style="left:2384px;top:461px;width:183px;height:28px;background:#d9d9d9;border-radius:5px"></div>
<div id="t63" class="t" style="left:2391px;top:465.5px;height:19px;line-height:19px;font-size:19px;color:#111;font-weight:normal;transform:scaleX(0.9462);transform-origin:0 50%;">0.0</div>
<div id="t64" class="t" style="left:2048px;top:503.0px;height:20px;line-height:20px;font-size:20px;color:#dcdcdc;font-weight:normal;transform:scaleX(0.8882);transform-origin:0 50%;">Y 위치</div>
<div style="left:2384px;top:499px;width:183px;height:28px;background:#d9d9d9;border-radius:5px"></div>
<div id="t65" class="t" style="left:2391px;top:503.5px;height:19px;line-height:19px;font-size:19px;color:#111;font-weight:normal;transform:scaleX(0.9462);transform-origin:0 50%;">0.0</div>
<div id="t66" class="t" style="left:2048px;top:541.0px;height:20px;line-height:20px;font-size:20px;color:#dcdcdc;font-weight:normal;transform:scaleX(0.8828);transform-origin:0 50%;">X 크기</div>
<div style="left:2384px;top:537px;width:183px;height:28px;background:#d9d9d9;border-radius:5px"></div>
<div id="t67" class="t" style="left:2391px;top:541.5px;height:19px;line-height:19px;font-size:19px;color:#111;font-weight:normal;transform:scaleX(1.0323);transform-origin:0 50%;">1920.0</div>
<div id="t68" class="t" style="left:2048px;top:578.0px;height:20px;line-height:20px;font-size:20px;color:#dcdcdc;font-weight:normal;transform:scaleX(0.8882);transform-origin:0 50%;">Y 크기</div>
<div style="left:2384px;top:574px;width:183px;height:28px;background:#d9d9d9;border-radius:5px"></div>
<div id="t69" class="t" style="left:2391px;top:578.5px;height:19px;line-height:19px;font-size:19px;color:#111;font-weight:normal;transform:scaleX(1.0323);transform-origin:0 50%;">1080.0</div>
<div id="t70" class="t" style="left:2048px;top:620.0px;height:20px;line-height:20px;font-size:20px;color:#dcdcdc;font-weight:normal;transform:scaleX(0.9895);transform-origin:0 50%;">Alignment</div>
<div style="left:2384px;top:616px;width:201px;height:29px;background:#d9d9d9;border-radius:5px"></div>
<div id="t71" class="t" style="left:2390px;top:621.0px;height:19px;line-height:19px;font-size:19px;color:#111;font-weight:normal;">X</div>
<div id="t72" class="t" style="left:2413px;top:621.0px;height:19px;line-height:19px;font-size:19px;color:#111;font-weight:normal;transform:scaleX(0.9462);transform-origin:0 50%;">0.0</div>
<div style="left:2591px;top:616px;width:201px;height:29px;background:#d9d9d9;border-radius:5px"></div>
<div id="t73" class="t" style="left:2597px;top:621.0px;height:19px;line-height:19px;font-size:19px;color:#111;font-weight:normal;">Y</div>
<div id="t74" class="t" style="left:2620px;top:621.0px;height:19px;line-height:19px;font-size:19px;color:#111;font-weight:normal;transform:scaleX(0.9462);transform-origin:0 50%;">0.0</div>
<div id="t75" class="t" style="left:2048px;top:663.0px;height:20px;line-height:20px;font-size:20px;color:#dcdcdc;font-weight:normal;transform:scaleX(0.9585);transform-origin:0 50%;">Size To Content</div>
<div style="left:2385px;top:661px;width:25px;height:25px;background:#a9a9a9;border-radius:3px"></div>
<div id="t76" class="t" style="left:2048px;top:704.0px;height:20px;line-height:20px;font-size:20px;color:#dcdcdc;font-weight:normal;transform:scaleX(0.9156);transform-origin:0 50%;">ZOrder</div>
<div style="left:2384px;top:700px;width:183px;height:28px;background:#d9d9d9;border-radius:5px"></div>
<div id="t77" class="t" style="left:2391px;top:704.5px;height:19px;line-height:19px;font-size:19px;color:#111;font-weight:normal;transform:scaleX(0.8508);transform-origin:0 50%;">0</div>
<div style="left:2020px;top:738px;width:1040px;height:50px;background:#2f2f2f"></div>
<div id="t78" class="t" style="left:2044px;top:751.5px;height:23px;line-height:23px;font-size:23px;color:#f2f2f2;font-weight:bold;transform:scaleX(0.9439);transform-origin:0 50%;text-shadow:2px 2px 1px #000">Content</div>
<div style="left:2376.5px;top:738px;width:1.5px;height:266px;background:#2c2c2c"></div>
<div id="t79" class="t" style="left:2048px;top:807.5px;height:20px;line-height:20px;font-size:20px;color:#dcdcdc;font-weight:normal;transform:scaleX(0.9867);transform-origin:0 50%;">Horizontal Alignment</div>
<div id="t80" class="t" style="left:2048px;top:865.5px;height:20px;line-height:20px;font-size:20px;color:#dcdcdc;font-weight:normal;transform:scaleX(0.9938);transform-origin:0 50%;">Vertical Alignment</div>
<div style="left:2387px;top:797px;width:42px;height:41px;background:#474747;border-radius:3px"></div>
<div style="left:2387px;top:855px;width:42px;height:41px;background:#474747;border-radius:3px"></div>
<div style="left:2436px;top:797px;width:42px;height:41px;background:#474747;border-radius:3px"></div>
<div style="left:2436px;top:855px;width:42px;height:41px;background:#474747;border-radius:3px"></div>
<div style="left:2485px;top:797px;width:42px;height:41px;background:#474747;border-radius:3px"></div>
<div style="left:2485px;top:855px;width:42px;height:41px;background:#474747;border-radius:3px"></div>
<div style="left:2534px;top:797px;width:42px;height:41px;background:#dc820b;border-radius:3px"></div>
<div style="left:2534px;top:855px;width:42px;height:41px;background:#dc820b;border-radius:3px"></div>
<div id="t81" class="t" style="left:2048px;top:915.5px;height:20px;line-height:20px;font-size:20px;color:#dcdcdc;font-weight:normal;transform:scaleX(0.9504);transform-origin:0 50%;">Content Color and Opacity</div>
<div style="left:2384px;top:915px;width:409px;height:21px;background:#fff"></div>
<div style="left:2948px;top:907px;width:91px;height:36px;background:linear-gradient(#dcdcdc,#b9b9b9);border-radius:3px;box-shadow:0 1px 1px #1a1a1a"></div>
<div id="t82" class="t" style="left:2957px;top:914.5px;height:21px;line-height:21px;font-size:21px;color:#111;font-weight:normal;transform:scaleX(0.9524);transform-origin:0 50%;">바인드</div>
<div id="t83" class="t" style="left:2048px;top:956.0px;height:20px;line-height:20px;font-size:20px;color:#dcdcdc;font-weight:normal;transform:scaleX(0.9536);transform-origin:0 50%;">Padding</div>
<div style="left:2384px;top:950px;width:409px;height:32px;background:#d9d9d9;border-radius:5px"></div>
<div id="t84" class="t" style="left:2392px;top:956.5px;height:19px;line-height:19px;font-size:19px;color:#111;font-weight:normal;transform:scaleX(1.0096);transform-origin:0 50%;">4.0, 2.0</div>
<div style="left:2020px;top:1010px;width:1040px;height:50px;background:#2f2f2f"></div>
<div id="t85" class="t" style="left:2044px;top:1023.5px;height:23px;line-height:23px;font-size:23px;color:#f2f2f2;font-weight:bold;transform:scaleX(0.9265);transform-origin:0 50%;text-shadow:2px 2px 1px #000">Appearance</div>
<div style="left:2376.5px;top:1010px;width:1.5px;height:342px;background:#2c2c2c"></div>
<div id="t86" class="t" style="left:2048px;top:1070.0px;height:20px;line-height:20px;font-size:20px;color:#dcdcdc;font-weight:normal;transform:scaleX(0.9569);transform-origin:0 50%;">Brush</div>
<div style="left:2384px;top:1065px;width:31px;height:32px;background:#fff"></div>
<div style="left:2948px;top:1064px;width:91px;height:34px;background:linear-gradient(#dcdcdc,#b9b9b9);border-radius:3px;box-shadow:0 1px 1px #1a1a1a"></div>
<div id="t87" class="t" style="left:2957px;top:1070.5px;height:21px;line-height:21px;font-size:21px;color:#111;font-weight:normal;transform:scaleX(0.9524);transform-origin:0 50%;">바인드</div>
<div id="t88" class="t" style="left:2048px;top:1112.0px;height:20px;line-height:20px;font-size:20px;color:#dcdcdc;font-weight:normal;transform:scaleX(0.9564);transform-origin:0 50%;">Brush Color</div>
<div style="left:2948px;top:1105px;width:91px;height:35px;background:linear-gradient(#dcdcdc,#b9b9b9);border-radius:3px;box-shadow:0 1px 1px #1a1a1a"></div>
<div id="t89" class="t" style="left:2957px;top:1112.0px;height:21px;line-height:21px;font-size:21px;color:#111;font-weight:normal;transform:scaleX(0.9524);transform-origin:0 50%;">바인드</div>
<div id="t90" class="t" style="left:2065px;top:1153.0px;height:20px;line-height:20px;font-size:20px;color:#dcdcdc;font-weight:normal;">R</div>
<div style="left:2384px;top:1149px;width:183px;height:28px;background:#d9d9d9;border-radius:5px"></div>
<div id="t91" class="t" style="left:2391px;top:1153.5px;height:19px;line-height:19px;font-size:19px;color:#111;font-weight:normal;transform:scaleX(0.9462);transform-origin:0 50%;">0.0</div>
<div id="t92" class="t" style="left:2065px;top:1195.0px;height:20px;line-height:20px;font-size:20px;color:#dcdcdc;font-weight:normal;">G</div>
<div style="left:2384px;top:1191px;width:183px;height:28px;background:#d9d9d9;border-radius:5px"></div>
<div id="t93" class="t" style="left:2391px;top:1195.5px;height:19px;line-height:19px;font-size:19px;color:#111;font-weight:normal;transform:scaleX(0.9462);transform-origin:0 50%;">0.0</div>
<div id="t94" class="t" style="left:2065px;top:1236.0px;height:20px;line-height:20px;font-size:20px;color:#dcdcdc;font-weight:normal;">B</div>
<div style="left:2384px;top:1232px;width:183px;height:28px;background:#d9d9d9;border-radius:5px"></div>
<div id="t95" class="t" style="left:2391px;top:1236.5px;height:19px;line-height:19px;font-size:19px;color:#111;font-weight:normal;transform:scaleX(0.9462);transform-origin:0 50%;">0.0</div>
<div id="t96" class="t" style="left:2065px;top:1277.5px;height:20px;line-height:20px;font-size:20px;color:#dcdcdc;font-weight:normal;">A</div>
<div style="left:2384px;top:1273px;width:183px;height:29px;background:#d9d9d9;border-radius:5px"></div>
<div id="t97" class="t" style="left:2391px;top:1278.0px;height:19px;line-height:19px;font-size:19px;color:#111;font-weight:normal;transform:scaleX(1.0191);transform-origin:0 50%;">0.71825</div>
<div id="t98" class="t" style="left:2048px;top:1320.5px;height:20px;line-height:20px;font-size:20px;color:#dcdcdc;font-weight:normal;transform:scaleX(0.9469);transform-origin:0 50%;">Desired Size Scale</div>
<div style="left:2384px;top:1316px;width:201px;height:29px;background:#d9d9d9;border-radius:5px"></div>
<div id="t99" class="t" style="left:2390px;top:1321.0px;height:19px;line-height:19px;font-size:19px;color:#111;font-weight:normal;">X</div>
<div id="t100" class="t" style="left:2413px;top:1321.0px;height:19px;line-height:19px;font-size:19px;color:#111;font-weight:normal;transform:scaleX(0.9462);transform-origin:0 50%;">1.0</div>
<div style="left:2591px;top:1316px;width:201px;height:29px;background:#d9d9d9;border-radius:5px"></div>
<div id="t101" class="t" style="left:2597px;top:1321.0px;height:19px;line-height:19px;font-size:19px;color:#111;font-weight:normal;">Y</div>
<div id="t102" class="t" style="left:2620px;top:1321.0px;height:19px;line-height:19px;font-size:19px;color:#111;font-weight:normal;transform:scaleX(0.9462);transform-origin:0 50%;">1.0</div>
<div style="left:2020px;top:1357px;width:1040px;height:19px;background:#474747"></div>
<svg style="left:0;top:0" width="1" height="1"><rect x="2034" y="269" width="20" height="13" rx="4" fill="none" stroke="#f0f0f0" stroke-width="1.8"/><rect x="2968" y="315.0" width="3" height="3" fill="#777"/><rect x="2974" y="315.0" width="8" height="3" fill="#777"/><rect x="2984" y="315.0" width="8" height="3" fill="#777"/><rect x="2968" y="320.3" width="3" height="3" fill="#777"/><rect x="2974" y="320.3" width="8" height="3" fill="#777"/><rect x="2984" y="320.3" width="8" height="3" fill="#777"/><rect x="2968" y="325.6" width="3" height="3" fill="#777"/><rect x="2974" y="325.6" width="8" height="3" fill="#777"/><rect x="2984" y="325.6" width="8" height="3" fill="#777"/><rect x="2968" y="330.9" width="3" height="3" fill="#777"/><rect x="2974" y="330.9" width="8" height="3" fill="#777"/><rect x="2984" y="330.9" width="8" height="3" fill="#777"/><rect x="2968" y="336.2" width="3" height="3" fill="#777"/><rect x="2974" y="336.2" width="8" height="3" fill="#777"/><rect x="2984" y="336.2" width="8" height="3" fill="#777"/><path d="M3009 327c8-11 22-11 30 0c-8 11-22 11-30 0z" fill="#d8d8d8"/><circle cx="3024" cy="327" r="5.5" fill="#5a7ab8"/><rect x="3022.5" y="322" width="3" height="4" fill="#c8c8c8"/><path d="M3046 323h14l-7 7z" fill="#aaa"/><path d="M2024 381.0L2037 368.0V381.0Z" fill="#bbb"/><path d="M2029 419.0L2036 425.0L2029 431.0Z" fill="none" stroke="#aaa" stroke-width="1.5"/><path d="M2545 424h14l-7 8z" fill="#111"/><g transform="translate(2361,475.0)"><path d="M-9 2L-1 -6L6 -6L6 1L-2 9Z" fill="#fafafa" stroke="#222" stroke-width="1"/><path d="M4 -9v8M0 -5h8" stroke="#fafafa" stroke-width="2.2"/></g><path d="M2557 468.0h-9l9 9z" fill="#111"/><path d="M2542 482.0h9l-9 -9z" fill="#111"/><g transform="translate(2361,513.0)"><path d="M-9 2L-1 -6L6 -6L6 1L-2 9Z" fill="#fafafa" stroke="#222" stroke-width="1"/><path d="M4 -9v8M0 -5h8" stroke="#fafafa" stroke-width="2.2"/></g><path d="M2557 506.0h-9l9 9z" fill="#111"/><path d="M2542 520.0h9l-9 -9z" fill="#111"/><g transform="translate(2361,551.0)"><path d="M-9 2L-1 -6L6 -6L6 1L-2 9Z" fill="#fafafa" stroke="#222" stroke-width="1"/><path d="M4 -9v8M0 -5h8" stroke="#fafafa" stroke-width="2.2"/></g><path d="M2557 544.0h-9l9 9z" fill="#111"/><path d="M2542 558.0h9l-9 -9z" fill="#111"/><path d="M2584 547.0h9v8h-8" fill="none" stroke="#dfe03a" stroke-width="2"/><path d="M2582 547.0l4 -4v8z" fill="#dfe03a"/><g transform="translate(2361,588.0)"><path d="M-9 2L-1 -6L6 -6L6 1L-2 9Z" fill="#fafafa" stroke="#222" stroke-width="1"/><path d="M4 -9v8M0 -5h8" stroke="#fafafa" stroke-width="2.2"/></g><path d="M2557 581.0h-9l9 9z" fill="#111"/><path d="M2542 595.0h9l-9 -9z" fill="#111"/><path d="M2584 584.0h9v8h-8" fill="none" stroke="#dfe03a" stroke-width="2"/><path d="M2582 584.0l4 -4v8z" fill="#dfe03a"/><path d="M2029 624.0L2036 630.0L2029 636.0Z" fill="none" stroke="#aaa" stroke-width="1.5"/><g transform="translate(2361,630.0)"><path d="M-9 2L-1 -6L6 -6L6 1L-2 9Z" fill="#fafafa" stroke="#222" stroke-width="1"/><path d="M4 -9v8M0 -5h8" stroke="#fafafa" stroke-width="2.2"/></g><path d="M2575 623.5h-9l9 9z" fill="#111"/><path d="M2560 637.5h9l-9 -9z" fill="#111"/><path d="M2782 623.5h-9l9 9z" fill="#111"/><path d="M2767 637.5h9l-9 -9z" fill="#111"/><g transform="translate(2361,673.0)"><path d="M-9 2L-1 -6L6 -6L6 1L-2 9Z" fill="#fafafa" stroke="#222" stroke-width="1"/><path d="M4 -9v8M0 -5h8" stroke="#fafafa" stroke-width="2.2"/></g><g transform="translate(2361,714.0)"><path d="M-9 2L-1 -6L6 -6L6 1L-2 9Z" fill="#fafafa" stroke="#222" stroke-width="1"/><path d="M4 -9v8M0 -5h8" stroke="#fafafa" stroke-width="2.2"/></g><path d="M2557 707.0h-9l9 9z" fill="#111"/><path d="M2542 721.0h9l-9 -9z" fill="#111"/><path d="M2024 771.0L2037 758.0V771.0Z" fill="#bbb"/><g transform="translate(2361,817.5)"><path d="M-9 2L-1 -6L6 -6L6 1L-2 9Z" fill="#fafafa" stroke="#222" stroke-width="1"/><path d="M4 -9v8M0 -5h8" stroke="#fafafa" stroke-width="2.2"/></g><g transform="translate(2361,875.5)"><path d="M-9 2L-1 -6L6 -6L6 1L-2 9Z" fill="#fafafa" stroke="#222" stroke-width="1"/><path d="M4 -9v8M0 -5h8" stroke="#fafafa" stroke-width="2.2"/></g><g stroke="#eee" fill="#eee"><path d="M2391 803v29" stroke-dasharray="2 2" stroke-width="1.2"/><rect x="2395" y="810" width="17" height="4" stroke="none"/><rect x="2395" y="818" width="11" height="4" stroke="none"/><path d="M2457 803v29" stroke-dasharray="2 2" stroke-width="1.2"/><rect x="2449" y="809" width="16" height="4" stroke="none"/><rect x="2451" y="818" width="12" height="4" stroke="none"/><path d="M2523 803v29" stroke-dasharray="2 2" stroke-width="1.2"/><rect x="2502" y="810" width="18" height="4" stroke="none"/><rect x="2508" y="818" width="12" height="4" stroke="none"/><path d="M2538 801v33M2572 801v33" stroke-dasharray="2 2" stroke-width="1.2"/><rect x="2542" y="810" width="26" height="5" stroke="none"/><rect x="2542" y="820" width="26" height="5" stroke="none"/><path d="M2391 858h33" stroke-dasharray="2 2" stroke-width="1.2"/><rect x="2399" y="862" width="5" height="17" stroke="none"/><rect x="2410" y="862" width="4" height="10" stroke="none"/><path d="M2440 875h35" stroke-dasharray="2 2" stroke-width="1.2"/><rect x="2448" y="866" width="4" height="18" stroke="none"/><rect x="2459" y="869" width="4" height="12" stroke="none"/><path d="M2489 893h34" stroke-dasharray="2 2" stroke-width="1.2"/><rect x="2497" y="870" width="4" height="21" stroke="none"/><rect x="2507" y="879" width="4" height="12" stroke="none"/><path d="M2537 858h36M2537 893h36" stroke-dasharray="2 2" stroke-width="1.2"/><rect x="2547" y="861" width="5" height="29" stroke="none"/><rect x="2558" y="861" width="5" height="29" stroke="none"/></g><path d="M2029 919.5L2036 925.5L2029 931.5Z" fill="none" stroke="#aaa" stroke-width="1.5"/><g transform="translate(2361,925.5)"><path d="M-9 2L-1 -6L6 -6L6 1L-2 9Z" fill="#fafafa" stroke="#222" stroke-width="1"/><path d="M4 -9v8M0 -5h8" stroke="#fafafa" stroke-width="2.2"/></g><path d="M3020 922.0h13l-6.5 7z" fill="#111"/><path d="M2029 960.0L2036 966.0L2029 972.0Z" fill="none" stroke="#aaa" stroke-width="1.5"/><g transform="translate(2361,966.0)"><path d="M-9 2L-1 -6L6 -6L6 1L-2 9Z" fill="#fafafa" stroke="#222" stroke-width="1"/><path d="M4 -9v8M0 -5h8" stroke="#fafafa" stroke-width="2.2"/></g><path d="M2024 1043.0L2037 1030.0V1043.0Z" fill="#bbb"/><path d="M2029 1074.0L2036 1080.0L2029 1086.0Z" fill="none" stroke="#aaa" stroke-width="1.5"/><path d="M3020 1078.0h13l-6.5 7z" fill="#111"/><path d="M2025 1128.0L2037 1116.0V1128.0Z" fill="#bbb"/><g transform="translate(2361,1122.0)"><path d="M-9 2L-1 -6L6 -6L6 1L-2 9Z" fill="#fafafa" stroke="#222" stroke-width="1"/><path d="M4 -9v8M0 -5h8" stroke="#fafafa" stroke-width="2.2"/></g><rect x="2384.0" y="1112.0" width="10.2" height="10.5" fill="#262626"/><rect x="2384.0" y="1122.5" width="10.2" height="10.5" fill="#1a1a1a"/><rect x="2394.2" y="1112.0" width="10.2" height="10.5" fill="#1a1a1a"/><rect x="2394.2" y="1122.5" width="10.2" height="10.5" fill="#262626"/><rect x="2404.4" y="1112.0" width="10.2" height="10.5" fill="#262626"/><rect x="2404.4" y="1122.5" width="10.2" height="10.5" fill="#1a1a1a"/><rect x="2414.6" y="1112.0" width="10.2" height="10.5" fill="#1a1a1a"/><rect x="2414.6" y="1122.5" width="10.2" height="10.5" fill="#262626"/><rect x="2424.8" y="1112.0" width="10.2" height="10.5" fill="#262626"/><rect x="2424.8" y="1122.5" width="10.2" height="10.5" fill="#1a1a1a"/><rect x="2435.0" y="1112.0" width="10.2" height="10.5" fill="#1a1a1a"/><rect x="2435.0" y="1122.5" width="10.2" height="10.5" fill="#262626"/><rect x="2445.2" y="1112.0" width="10.2" height="10.5" fill="#262626"/><rect x="2445.2" y="1122.5" width="10.2" height="10.5" fill="#1a1a1a"/><rect x="2455.4" y="1112.0" width="10.2" height="10.5" fill="#1a1a1a"/><rect x="2455.4" y="1122.5" width="10.2" height="10.5" fill="#262626"/><rect x="2465.6" y="1112.0" width="10.2" height="10.5" fill="#262626"/><rect x="2465.6" y="1122.5" width="10.2" height="10.5" fill="#1a1a1a"/><rect x="2475.8" y="1112.0" width="10.2" height="10.5" fill="#1a1a1a"/><rect x="2475.8" y="1122.5" width="10.2" height="10.5" fill="#262626"/><rect x="2486.0" y="1112.0" width="10.2" height="10.5" fill="#262626"/><rect x="2486.0" y="1122.5" width="10.2" height="10.5" fill="#1a1a1a"/><rect x="2496.2" y="1112.0" width="10.2" height="10.5" fill="#1a1a1a"/><rect x="2496.2" y="1122.5" width="10.2" height="10.5" fill="#262626"/><rect x="2506.4" y="1112.0" width="10.2" height="10.5" fill="#262626"/><rect x="2506.4" y="1122.5" width="10.2" height="10.5" fill="#1a1a1a"/><rect x="2516.6" y="1112.0" width="10.2" height="10.5" fill="#1a1a1a"/><rect x="2516.6" y="1122.5" width="10.2" height="10.5" fill="#262626"/><rect x="2526.8" y="1112.0" width="10.2" height="10.5" fill="#262626"/><rect x="2526.8" y="1122.5" width="10.2" height="10.5" fill="#1a1a1a"/><rect x="2537.0" y="1112.0" width="10.2" height="10.5" fill="#1a1a1a"/><rect x="2537.0" y="1122.5" width="10.2" height="10.5" fill="#262626"/><rect x="2547.2" y="1112.0" width="10.2" height="10.5" fill="#262626"/><rect x="2547.2" y="1122.5" width="10.2" height="10.5" fill="#1a1a1a"/><rect x="2557.4" y="1112.0" width="10.2" height="10.5" fill="#1a1a1a"/><rect x="2557.4" y="1122.5" width="10.2" height="10.5" fill="#262626"/><rect x="2567.6" y="1112.0" width="10.2" height="10.5" fill="#262626"/><rect x="2567.6" y="1122.5" width="10.2" height="10.5" fill="#1a1a1a"/><rect x="2577.8" y="1112.0" width="10.2" height="10.5" fill="#1a1a1a"/><rect x="2577.8" y="1122.5" width="10.2" height="10.5" fill="#262626"/><rect x="2588" y="1112" width="205" height="21" fill="#000"/><path d="M2800 1118.0h9v8h-8" fill="none" stroke="#dfe03a" stroke-width="2"/><path d="M2798 1118.0l4 -4v8z" fill="#dfe03a"/><path d="M3020 1119.5h13l-6.5 7z" fill="#111"/><g transform="translate(2361,1163.0)"><path d="M-9 2L-1 -6L6 -6L6 1L-2 9Z" fill="#fafafa" stroke="#222" stroke-width="1"/><path d="M4 -9v8M0 -5h8" stroke="#fafafa" stroke-width="2.2"/></g><path d="M2557 1156.0h-9l9 9z" fill="#111"/><path d="M2542 1170.0h9l-9 -9z" fill="#111"/><path d="M2584 1159.0h9v8h-8" fill="none" stroke="#dfe03a" stroke-width="2"/><path d="M2582 1159.0l4 -4v8z" fill="#dfe03a"/><g transform="translate(2361,1205.0)"><path d="M-9 2L-1 -6L6 -6L6 1L-2 9Z" fill="#fafafa" stroke="#222" stroke-width="1"/><path d="M4 -9v8M0 -5h8" stroke="#fafafa" stroke-width="2.2"/></g><path d="M2557 1198.0h-9l9 9z" fill="#111"/><path d="M2542 1212.0h9l-9 -9z" fill="#111"/><path d="M2584 1201.0h9v8h-8" fill="none" stroke="#dfe03a" stroke-width="2"/><path d="M2582 1201.0l4 -4v8z" fill="#dfe03a"/><g transform="translate(2361,1246.0)"><path d="M-9 2L-1 -6L6 -6L6 1L-2 9Z" fill="#fafafa" stroke="#222" stroke-width="1"/><path d="M4 -9v8M0 -5h8" stroke="#fafafa" stroke-width="2.2"/></g><path d="M2557 1239.0h-9l9 9z" fill="#111"/><path d="M2542 1253.0h9l-9 -9z" fill="#111"/><path d="M2584 1242.0h9v8h-8" fill="none" stroke="#dfe03a" stroke-width="2"/><path d="M2582 1242.0l4 -4v8z" fill="#dfe03a"/><g transform="translate(2361,1287.5)"><path d="M-9 2L-1 -6L6 -6L6 1L-2 9Z" fill="#fafafa" stroke="#222" stroke-width="1"/><path d="M4 -9v8M0 -5h8" stroke="#fafafa" stroke-width="2.2"/></g><path d="M2557 1280.5h-9l9 9z" fill="#111"/><path d="M2542 1294.5h9l-9 -9z" fill="#111"/><path d="M2029 1324.5L2036 1330.5L2029 1336.5Z" fill="none" stroke="#aaa" stroke-width="1.5"/><g transform="translate(2361,1330.5)"><path d="M-9 2L-1 -6L6 -6L6 1L-2 9Z" fill="#fafafa" stroke="#222" stroke-width="1"/><path d="M4 -9v8M0 -5h8" stroke="#fafafa" stroke-width="2.2"/></g><path d="M2575 1323.5h-9l9 9z" fill="#111"/><path d="M2560 1337.5h9l-9 -9z" fill="#111"/><path d="M2782 1323.5h-9l9 9z" fill="#111"/><path d="M2767 1337.5h9l-9 -9z" fill="#111"/><path d="M2520 1363h18l-9 9z" fill="#ddd"/><rect x="2520" y="1359" width="18" height="2" fill="#ddd"/></svg>
<div style="left:476px;top:1388px;width:263px;height:39px;background:#404040;border-radius:3px 3px 0 0;border-top:2px solid #c9a818"></div>
<div style="left:740px;top:1388px;width:263px;height:39px;background:#373737;border-radius:3px 3px 0 0"></div>
<svg style="left:486px;top:1396px" width="34" height="24"><path d="M2 6l26-5 3 9-27 5z" fill="#a8c0f0"/><path d="M3 14l27-4 2 8-27 4z" fill="#d8e4ff"/><path d="M8 5l4 3M18 4l2 4" stroke="#fff" stroke-width="1.5"/></svg>
<div id="t103" class="t" style="left:525px;top:1397.5px;height:21px;line-height:21px;font-size:21px;color:#e4e4e4;font-weight:normal;transform:scaleX(0.9405);transform-origin:0 50%;text-shadow:1px 1px 1px #000">타임라인</div>
<svg style="left:711px;top:1402px" width="10" height="10"><path d="M1 1l8 8M9 1L1 9" stroke="#262626" stroke-width="2.2"/></svg>
<svg style="left:753px;top:1395px" width="26" height="28"><path d="M3 3h14l6 6v17H3z" fill="#9fb6ea" stroke="#6a88d0"/><path d="M6 12l5 4-5 4M12 21h7" stroke="#223" stroke-width="2" fill="none"/></svg>
<div id="t104" class="t" style="left:790px;top:1397.5px;height:21px;line-height:21px;font-size:21px;color:#e0e0e0;font-weight:normal;transform:scaleX(0.9405);transform-origin:0 50%;text-shadow:1px 1px 1px #000">컴파일러 결과</div>
<svg style="left:975px;top:1402px" width="10" height="10"><path d="M1 1l8 8M9 1L1 9" stroke="#262626" stroke-width="2.2"/></svg>
<div style="left:469px;top:1427px;width:2601px;height:421px;background:#3e3e3e"></div>
<div style="left:905px;top:1430px;width:56px;height:49px;background:#dc820b;border-radius:3px"></div>
<div id="t105" class="t" style="left:1025px;top:1445.0px;height:22px;line-height:22px;font-size:22px;color:#e6e6e6;font-weight:normal;transform:scaleX(0.9510);transform-origin:0 50%;">20 fps</div>
<div style="left:483px;top:1485px;width:104px;height:37px;background:#51a851;border-radius:3px"></div>
<div id="t106" class="t" style="left:518px;top:1492.0px;height:22px;line-height:22px;font-size:22px;color:#fff;font-weight:bold;transform:scaleX(0.8864);transform-origin:0 50%;text-shadow:1px 1px 1px #111">트랙</div>
<div id="t107" class="t" style="left:620px;top:1492.0px;height:22px;line-height:22px;font-size:22px;color:#f4f4f4;font-weight:bold;transform:scaleX(0.9091);transform-origin:0 50%;text-shadow:1px 1px 1px #111">필터</div>
<div style="left:693px;top:1487px;width:458px;height:32px;background:#cecece;border-radius:4px;box-shadow:0 1px 0 #2a2a2a"></div>
<div id="t108" class="t" style="left:703px;top:1492.5px;height:21px;line-height:21px;font-size:21px;color:#8d8d8d;font-weight:normal;transform:scaleX(0.9238);transform-origin:0 50%;">트랙 검색</div>
<svg style="left:1121px;top:1490.0px" width="26" height="26"><circle cx="15" cy="10" r="7.5" fill="none" stroke="#111" stroke-width="3"/><path d="M9.5 15.5L4 21" stroke="#111" stroke-width="4.5" stroke-linecap="round"/></svg>
<div id="t109" class="t" style="left:1167px;top:1493.0px;height:20px;line-height:20px;font-size:20px;color:#e0860e;font-weight:normal;transform:scaleX(1.0530);transform-origin:0 50%;">0.70</div>
<div style="left:473px;top:1527px;width:778px;height:49px;background:#2f2f2f"></div>
<div id="t110" class="t" style="left:541px;top:1541.0px;height:22px;line-height:22px;font-size:22px;color:#e8e8e8;font-weight:normal;transform:scaleX(0.9246);transform-origin:0 50%;">Border_52</div>
<div id="t111" class="t" style="left:530px;top:1585.5px;height:21px;line-height:21px;font-size:21px;color:#e8e8e8;font-weight:normal;transform:scaleX(0.9830);transform-origin:0 50%;">Brush Color</div>
<div id="t112" class="t" style="left:548px;top:1618.5px;height:21px;line-height:21px;font-size:21px;color:#ededed;font-weight:normal;font-style:italic">R</div>
<div id="t113" class="t" style="left:992px;top:1620.0px;height:20px;line-height:20px;font-size:20px;color:#9a9a9a;font-weight:normal;transform:scaleX(1.0787);transform-origin:0 50%;">0.0</div>
<div id="t114" class="t" style="left:548px;top:1644.5px;height:21px;line-height:21px;font-size:21px;color:#ededed;font-weight:normal;font-style:italic">G</div>
<div id="t115" class="t" style="left:992px;top:1646.0px;height:20px;line-height:20px;font-size:20px;color:#9a9a9a;font-weight:normal;transform:scaleX(1.0787);transform-origin:0 50%;">0.0</div>
<div id="t116" class="t" style="left:548px;top:1670.5px;height:21px;line-height:21px;font-size:21px;color:#ededed;font-weight:normal;font-style:italic">B</div>
<div id="t117" class="t" style="left:992px;top:1672.0px;height:20px;line-height:20px;font-size:20px;color:#9a9a9a;font-weight:normal;transform:scaleX(1.0787);transform-origin:0 50%;">0.0</div>
<div id="t118" class="t" style="left:548px;top:1696.5px;height:21px;line-height:21px;font-size:21px;color:#ededed;font-weight:normal;font-style:italic">A</div>
<div id="t119" class="t" style="left:992px;top:1698.0px;height:20px;line-height:20px;font-size:20px;color:#9a9a9a;font-weight:normal;transform:scaleX(1.0512);transform-origin:0 50%;">0.71825</div>
<div style="left:1240px;top:1576px;width:11px;height:144px;background:#474747"></div>
<div id="t120" class="t" style="left:487px;top:1757.5px;height:21px;line-height:21px;font-size:21px;color:#e6e6e6;font-weight:normal;transform:scaleX(0.9315);transform-origin:0 50%;">7 아이템</div>
<svg style="left:0;top:0" width="1" height="1"><defs><mask id="wm"><rect x="480" y="1430" width="60" height="50" fill="#fff"/><rect x="492" y="1436" width="9" height="10" fill="#000" transform="rotate(45 496 1441)"/></mask></defs><g mask="url(#wm)" fill="#f0f0f0"><circle cx="502" cy="1449" r="8"/><path d="M503 1451l16 16" stroke="#f0f0f0" stroke-width="7" stroke-linecap="round"/></g><circle cx="519" cy="1467" r="1.8" fill="#3e3e3e"/><path d="M534 1451h14l-7 8z" fill="#9a9a9a"/><path d="M618 1451h14l-7 8z" fill="#9a9a9a"/><path d="M702 1451h14l-7 8z" fill="#9a9a9a"/><path d="M793 1451h14l-7 8z" fill="#9a9a9a"/><path d="M982 1452h14l-7 8z" fill="#9a9a9a"/><path d="M1086 1452h14l-7 8z" fill="#9a9a9a"/><path d="M573 1455.5c10-15 30-15 40 0c-10 15-30 15-40 0z" fill="#f4f4f4"/><circle cx="593" cy="1455.5" r="9" fill="none" stroke="#3e3e3e" stroke-width="2.2"/><circle cx="588.5" cy="1451" r="2.5" fill="#3e3e3e"/><path d="M669 1443l20 12-20 12z" fill="#f4f4f4"/><rect x="732" y="1432" width="2.5" height="46" fill="#2c2c2c"/><rect x="893" y="1432" width="2.5" height="46" fill="#2c2c2c"/><rect x="1012" y="1432" width="2.5" height="46" fill="#2c2c2c"/><rect x="1113" y="1432" width="2.5" height="46" fill="#2c2c2c"/><path d="M768 1439l16 16-16 16-16-16z" fill="none" stroke="#f4f4f4" stroke-width="4.5" stroke-linejoin="round"/><path d="M856 1438l16 17-16 17-17-17z" fill="#f4f4f4"/><circle cx="852" cy="1450" r="4" fill="none" stroke="#3e3e3e" stroke-width="2.2"/><path d="M855 1453l6 6M859 1457l-2 2M861 1459l-2 2" stroke="#3e3e3e" stroke-width="2"/><path d="M922 1470v-14a11 11 0 0 1 22 0v14" fill="none" stroke="#fafafa" stroke-width="8"/><rect x="918" y="1464" width="8" height="6" fill="#dc820b"/><rect x="940" y="1464" width="8" height="6" fill="#dc820b"/><rect x="918" y="1466" width="8" height="5" fill="#fafafa" opacity=".8"/><rect x="940" y="1466" width="8" height="5" fill="#fafafa" opacity=".8"/><path d="M1135 1438v33h37" fill="none" stroke="#9a9a9a" stroke-width="2"/><path d="M1136 1462c6-14 12-14 18-5s12 12 17 3" fill="none" stroke="#e0e0e0" stroke-width="2"/><path d="M499 1493v17M490.5 1501.5h17" stroke="#fff" stroke-width="4.5"/><path d="M566 1498h14l-7 8z" fill="#fff"/><path d="M598 1493h17l-6 8v9l-5-3v-6z" fill="#f0f0f0"/><path d="M665 1498h14l-7 8z" fill="#f0f0f0"/><path d="M486 1559L499 1546V1559Z" fill="#bbb"/><rect x="510" y="1545" width="20" height="13" rx="4" fill="none" stroke="#e8e8e8" stroke-width="1.8"/><path d="M1207 1543v17M1198.5 1551.5h17" stroke="#f0f0f0" stroke-width="4"/><path d="M504 1603L517 1591V1603Z" fill="#bbb"/><path d="M1140 1587v17M1131.5 1595.5h17" stroke="#f0f0f0" stroke-width="4"/><path d="M1180 1590l-6 6 6 6M1175 1596h12" fill="none" stroke="#8a8a8a" stroke-width="3.2"/><circle cx="1199" cy="1596" r="6.5" fill="none" stroke="#8a8a8a" stroke-width="2.4"/><path d="M1199 1592v8M1195 1596h8" stroke="#8a8a8a" stroke-width="2.2"/><path d="M1219 1590l6 6-6 6M1225 1596h-12" fill="none" stroke="#8a8a8a" stroke-width="3.2"/><path d="M990 1642h36" stroke="#9a9a9a" stroke-width="1.2" stroke-dasharray="1.5 1.5"/><path d="M1180 1623l-6 6 6 6M1175 1629h12" fill="none" stroke="#8a8a8a" stroke-width="3.2"/><circle cx="1199" cy="1629" r="6.5" fill="none" stroke="#8a8a8a" stroke-width="2.4"/><path d="M1199 1625v8M1195 1629h8" stroke="#8a8a8a" stroke-width="2.2"/><path d="M1219 1623l6 6-6 6M1225 1629h-12" fill="none" stroke="#8a8a8a" stroke-width="3.2"/><path d="M990 1668h36" stroke="#9a9a9a" stroke-width="1.2" stroke-dasharray="1.5 1.5"/><path d="M1180 1649l-6 6 6 6M1175 1655h12" fill="none" stroke="#8a8a8a" stroke-width="3.2"/><circle cx="1199" cy="1655" r="6.5" fill="none" stroke="#8a8a8a" stroke-width="2.4"/><path d="M1199 1651v8M1195 1655h8" stroke="#8a8a8a" stroke-width="2.2"/><path d="M1219 1649l6 6-6 6M1225 1655h-12" fill="none" stroke="#8a8a8a" stroke-width="3.2"/><path d="M990 1694h36" stroke="#9a9a9a" stroke-width="1.2" stroke-dasharray="1.5 1.5"/><path d="M1180 1675l-6 6 6 6M1175 1681h12" fill="none" stroke="#8a8a8a" stroke-width="3.2"/><circle cx="1199" cy="1681" r="6.5" fill="none" stroke="#8a8a8a" stroke-width="2.4"/><path d="M1199 1677v8M1195 1681h8" stroke="#8a8a8a" stroke-width="2.2"/><path d="M1219 1675l6 6-6 6M1225 1681h-12" fill="none" stroke="#8a8a8a" stroke-width="3.2"/><path d="M990 1720h82" stroke="#9a9a9a" stroke-width="1.2" stroke-dasharray="1.5 1.5"/><path d="M1180 1701l-6 6 6 6M1175 1707h12" fill="none" stroke="#8a8a8a" stroke-width="3.2"/><circle cx="1199" cy="1707" r="6.5" fill="none" stroke="#8a8a8a" stroke-width="2.4"/><path d="M1199 1703v8M1195 1707h8" stroke="#8a8a8a" stroke-width="2.2"/><path d="M1219 1701l6 6-6 6M1225 1707h-12" fill="none" stroke="#8a8a8a" stroke-width="3.2"/><g fill="#c8c8c8"><path d="M638 1805h4l3 3v7l-3 3 3 3v7l-3 3h-4z"/><path d="M664 1817l12-13v26z"/><rect x="678" y="1805" width="4" height="25"/><rect x="685" y="1805" width="4" height="25"/><path d="M708 1817l12-13v26z"/><path d="M735 1817l-6-6-6 6 6 6z" fill="none" stroke="#c8c8c8" stroke-width="3"/><path d="M755 1817l10-12v24z"/><rect x="767" y="1805" width="4" height="24"/><rect x="774" y="1805" width="4" height="24"/><path d="M799 1817l27-14v28z" stroke="#c8c8c8" stroke-width="2" stroke-linejoin="round"/><path d="M850 1803l27 14-27 14z" stroke="#c8c8c8" stroke-width="2" stroke-linejoin="round"/><rect x="899" y="1805" width="4" height="24"/><path d="M906 1805l11 12-11 12z"/><path d="M951 1817l-6-6-6 6 6 6z" fill="none" stroke="#c8c8c8" stroke-width="3"/><path d="M957 1804l12 13-12 13z"/><rect x="976" y="1805" width="4" height="25"/><rect x="983" y="1805" width="4" height="25"/><path d="M990 1804l12 13-12 13z"/><path d="M1025 1805h-4l-3 3v7l3 3-3 3v7l3 3h4z"/><rect x="1050" y="1815" width="22" height="4"/><path d="M1069 1810l9 7-9 7z"/></g></svg>
<svg style="left:0;top:0" width="1" height="1"><rect x="1258" y="1480" width="1808" height="47" fill="#1f1f1f"/><rect x="1258" y="1527" width="1808" height="258" fill="#2b2b2b"/><rect x="1407" y="1527" width="602" height="49" fill="#3d3d3d"/><defs><linearGradient id="bcg" x1="0" x2="1"><stop offset="0" stop-color="#000" stop-opacity="1"/><stop offset="1" stop-color="#000" stop-opacity="0"/></linearGradient><pattern id="chk" width="32" height="32" patternUnits="userSpaceOnUse" x="1409" y="1577"><rect width="32" height="32" fill="#a0a0a0"/><rect width="16" height="16" fill="#5a5a5a"/><rect x="16" y="16" width="16" height="16" fill="#5a5a5a"/></pattern></defs><rect x="1409" y="1577" width="599" height="32" fill="url(#chk)"/><rect x="1409" y="1577" width="599" height="32" fill="url(#bcg)"/><rect x="1407" y="1609" width="602" height="111" fill="#474747"/><rect x="1407" y="1720" width="602" height="65" fill="#3c3c3c"/><rect x="1257.5" y="1527" width="1.5" height="258" fill="#1c1c1c" opacity="0.8"/><rect x="1332.8" y="1527" width="1.5" height="258" fill="#1c1c1c" opacity="0.8"/><rect x="1408.1" y="1527" width="1.5" height="258" fill="#1c1c1c" opacity="0.8"/><rect x="1483.4" y="1527" width="1.5" height="258" fill="#1c1c1c" opacity="0.8"/><rect x="1558.7" y="1527" width="1.5" height="258" fill="#1c1c1c" opacity="0.8"/><rect x="1634.0" y="1527" width="1.5" height="258" fill="#1c1c1c" opacity="0.8"/><rect x="1709.3" y="1527" width="1.5" height="258" fill="#1c1c1c" opacity="0.8"/><rect x="1784.6" y="1527" width="1.5" height="258" fill="#1c1c1c" opacity="0.8"/><rect x="1859.9" y="1527" width="1.5" height="258" fill="#1c1c1c" opacity="0.8"/><rect x="1935.2" y="1527" width="1.5" height="258" fill="#1c1c1c" opacity="0.8"/><rect x="2010.5" y="1527" width="1.5" height="258" fill="#1c1c1c" opacity="0.8"/><rect x="2085.8" y="1527" width="1.5" height="258" fill="#1c1c1c" opacity="0.8"/><rect x="2161.1" y="1527" width="1.5" height="258" fill="#1c1c1c" opacity="0.8"/><rect x="2236.4" y="1527" width="1.5" height="258" fill="#1c1c1c" opacity="0.8"/><rect x="2311.7" y="1527" width="1.5" height="258" fill="#1c1c1c" opacity="0.8"/><rect x="2387.0" y="1527" width="1.5" height="258" fill="#1c1c1c" opacity="0.8"/><rect x="2462.3" y="1527" width="1.5" height="258" fill="#1c1c1c" opacity="0.8"/><rect x="2537.6" y="1527" width="1.5" height="258" fill="#1c1c1c" opacity="0.8"/><rect x="2612.9" y="1527" width="1.5" height="258" fill="#1c1c1c" opacity="0.8"/><rect x="2688.2" y="1527" width="1.5" height="258" fill="#1c1c1c" opacity="0.8"/><rect x="2763.5" y="1527" width="1.5" height="258" fill="#1c1c1c" opacity="0.8"/><rect x="2838.8" y="1527" width="1.5" height="258" fill="#1c1c1c" opacity="0.8"/><rect x="2914.1" y="1527" width="1.5" height="258" fill="#1c1c1c" opacity="0.8"/><rect x="2989.4" y="1527" width="1.5" height="258" fill="#1c1c1c" opacity="0.8"/><rect x="3064.7" y="1527" width="1.5" height="258" fill="#1c1c1c" opacity="0.8"/><rect x="1409" y="1577" width="599" height="32" fill="url(#chk)"/><rect x="1409" y="1577" width="599" height="32" fill="url(#bcg)"/><rect x="1409" y="1609" width="599" height="111" fill="#474747"/><rect x="1258" y="1785" width="1808" height="59" fill="#1f1f1f"/><rect x="1258" y="1785" width="1808" height="2" fill="#454545"/><rect x="1257.0" y="1512" width="2.2" height="15" fill="#dcdcdc"/><rect x="1257.0" y="1788" width="2.2" height="15" fill="#dcdcdc"/><rect x="1332.3" y="1512" width="2.2" height="15" fill="#dcdcdc"/><rect x="1332.3" y="1788" width="2.2" height="15" fill="#dcdcdc"/><rect x="1407.6" y="1512" width="2.2" height="15" fill="#dcdcdc"/><rect x="1407.6" y="1788" width="2.2" height="15" fill="#dcdcdc"/><rect x="1482.9" y="1512" width="2.2" height="15" fill="#dcdcdc"/><rect x="1482.9" y="1788" width="2.2" height="15" fill="#dcdcdc"/><rect x="1558.2" y="1512" width="2.2" height="15" fill="#dcdcdc"/><rect x="1558.2" y="1788" width="2.2" height="15" fill="#dcdcdc"/><rect x="1633.5" y="1512" width="2.2" height="15" fill="#dcdcdc"/><rect x="1633.5" y="1788" width="2.2" height="15" fill="#dcdcdc"/><rect x="1708.8" y="1512" width="2.2" height="15" fill="#dcdcdc"/><rect x="1708.8" y="1788" width="2.2" height="15" fill="#dcdcdc"/><rect x="1784.1" y="1512" width="2.2" height="15" fill="#dcdcdc"/><rect x="1784.1" y="1788" width="2.2" height="15" fill="#dcdcdc"/><rect x="1859.4" y="1512" width="2.2" height="15" fill="#dcdcdc"/><rect x="1859.4" y="1788" width="2.2" height="15" fill="#dcdcdc"/><rect x="1934.7" y="1512" width="2.2" height="15" fill="#dcdcdc"/><rect x="1934.7" y="1788" width="2.2" height="15" fill="#dcdcdc"/><rect x="2010.0" y="1512" width="2.2" height="15" fill="#dcdcdc"/><rect x="2010.0" y="1788" width="2.2" height="15" fill="#dcdcdc"/><rect x="2085.3" y="1512" width="2.2" height="15" fill="#dcdcdc"/><rect x="2085.3" y="1788" width="2.2" height="15" fill="#dcdcdc"/><rect x="2160.6" y="1512" width="2.2" height="15" fill="#dcdcdc"/><rect x="2160.6" y="1788" width="2.2" height="15" fill="#dcdcdc"/><rect x="2235.9" y="1512" width="2.2" height="15" fill="#dcdcdc"/><rect x="2235.9" y="1788" width="2.2" height="15" fill="#dcdcdc"/><rect x="2311.2" y="1512" width="2.2" height="15" fill="#dcdcdc"/><rect x="2311.2" y="1788" width="2.2" height="15" fill="#dcdcdc"/><rect x="2386.5" y="1512" width="2.2" height="15" fill="#dcdcdc"/><rect x="2386.5" y="1788" width="2.2" height="15" fill="#dcdcdc"/><rect x="2461.8" y="1512" width="2.2" height="15" fill="#dcdcdc"/><rect x="2461.8" y="1788" width="2.2" height="15" fill="#dcdcdc"/><rect x="2537.1" y="1512" width="2.2" height="15" fill="#dcdcdc"/><rect x="2537.1" y="1788" width="2.2" height="15" fill="#dcdcdc"/><rect x="2612.4" y="1512" width="2.2" height="15" fill="#dcdcdc"/><rect x="2612.4" y="1788" width="2.2" height="15" fill="#dcdcdc"/><rect x="2687.7" y="1512" width="2.2" height="15" fill="#dcdcdc"/><rect x="2687.7" y="1788" width="2.2" height="15" fill="#dcdcdc"/><rect x="2763.0" y="1512" width="2.2" height="15" fill="#dcdcdc"/><rect x="2763.0" y="1788" width="2.2" height="15" fill="#dcdcdc"/><rect x="2838.3" y="1512" width="2.2" height="15" fill="#dcdcdc"/><rect x="2838.3" y="1788" width="2.2" height="15" fill="#dcdcdc"/><rect x="2913.6" y="1512" width="2.2" height="15" fill="#dcdcdc"/><rect x="2913.6" y="1788" width="2.2" height="15" fill="#dcdcdc"/><rect x="2988.9" y="1512" width="2.2" height="15" fill="#dcdcdc"/><rect x="2988.9" y="1788" width="2.2" height="15" fill="#dcdcdc"/><rect x="3064.2" y="1512" width="2.2" height="15" fill="#dcdcdc"/><rect x="3064.2" y="1788" width="2.2" height="15" fill="#dcdcdc"/><rect x="1406" y="1480" width="2.5" height="368" fill="#2a9a2a"/><path d="M1408 1480h12l-12 12z" fill="#2a9a2a"/><path d="M1408 1844h12l-12-10z" fill="#2a9a2a"/><rect x="2007.5" y="1480" width="2.5" height="368" fill="#a02020"/><path d="M2008 1480h-10l10 10z" fill="#a02020"/><path d="M2008 1844h-12l12-10z" fill="#a02020"/><path d="M1411 1536h-3v30h3" fill="none" stroke="#ddd" stroke-width="2"/><path d="M2005 1536h3v30h-3" fill="none" stroke="#ddd" stroke-width="2"/><circle cx="1408" cy="1629" r="7.2" fill="#e07070" stroke="#8a3a3a" stroke-width="1"/><path d="M1408 1622 a7 7 0 0 0 0 14z" fill="#c05858"/><circle cx="1408" cy="1656" r="7.2" fill="#e07070" stroke="#8a3a3a" stroke-width="1"/><path d="M1408 1649 a7 7 0 0 0 0 14z" fill="#c05858"/><circle cx="1408" cy="1681.5" r="7.2" fill="#e07070" stroke="#8a3a3a" stroke-width="1"/><path d="M1408 1674.5 a7 7 0 0 0 0 14z" fill="#c05858"/><circle cx="1408" cy="1708" r="7.2" fill="#e07070" stroke="#8a3a3a" stroke-width="1"/><path d="M1408 1701 a7 7 0 0 0 0 14z" fill="#c05858"/><circle cx="2010" cy="1708" r="7" fill="#8a7a7a"/><rect x="1618.3" y="1527" width="1.8" height="258" fill="#c8c8c8"/><path d="M1608 1485a3 3 0 0 1 3-3h16a3 3 0 0 1 3 3v31l-11 11-11-11z" fill="#9a4a36" stroke="#6a2a20" stroke-width="1"/><path d="M1608 1840a3 3 0 0 0 3 3h16a3 3 0 0 0 3-3v-39l-11-11-11 11z" fill="#9a4a36" stroke="#6a2a20" stroke-width="1"/><path d="M3030 1462v-13a5 5 0 0 1 10 0v3" fill="none" stroke="#ddd" stroke-width="2.5"/><rect x="3035" y="1454" width="17" height="11" rx="1" fill="#ddd"/><rect x="3042" y="1457" width="3" height="4" fill="#3e3e3e"/></svg>
<div id="t121" class="t" style="left:1267.0px;top:1507.5px;height:19px;line-height:19px;font-size:19px;color:#8c8c8c;font-weight:normal;">-0.50</div>
<div id="t122" class="t" style="left:1267.0px;top:1790.5px;height:19px;line-height:19px;font-size:19px;color:#8c8c8c;font-weight:normal;">-0.50</div>
<div id="t123" class="t" style="left:1342.3px;top:1507.5px;height:19px;line-height:19px;font-size:19px;color:#8c8c8c;font-weight:normal;">-0.25</div>
<div id="t124" class="t" style="left:1342.3px;top:1790.5px;height:19px;line-height:19px;font-size:19px;color:#8c8c8c;font-weight:normal;">-0.25</div>
<div id="t125" class="t" style="left:1417.6px;top:1507.5px;height:19px;line-height:19px;font-size:19px;color:#8c8c8c;font-weight:normal;">0.00</div>
<div id="t126" class="t" style="left:1417.6px;top:1790.5px;height:19px;line-height:19px;font-size:19px;color:#8c8c8c;font-weight:normal;">0.00</div>
<div id="t127" class="t" style="left:1492.9px;top:1507.5px;height:19px;line-height:19px;font-size:19px;color:#8c8c8c;font-weight:normal;">0.25</div>
<div id="t128" class="t" style="left:1492.9px;top:1790.5px;height:19px;line-height:19px;font-size:19px;color:#8c8c8c;font-weight:normal;">0.25</div>
<div id="t129" class="t" style="left:1568.2px;top:1507.5px;height:19px;line-height:19px;font-size:19px;color:#8c8c8c;font-weight:normal;">0.50</div>
<div id="t130" class="t" style="left:1568.2px;top:1790.5px;height:19px;line-height:19px;font-size:19px;color:#8c8c8c;font-weight:normal;">0.50</div>
<div id="t131" class="t" style="left:1643.5px;top:1507.5px;height:19px;line-height:19px;font-size:19px;color:#8c8c8c;font-weight:normal;">0.75</div>
<div id="t132" class="t" style="left:1643.5px;top:1790.5px;height:19px;line-height:19px;font-size:19px;color:#8c8c8c;font-weight:normal;">0.75</div>
<div id="t133" class="t" style="left:1718.8px;top:1507.5px;height:19px;line-height:19px;font-size:19px;color:#8c8c8c;font-weight:normal;">1.00</div>
<div id="t134" class="t" style="left:1718.8px;top:1790.5px;height:19px;line-height:19px;font-size:19px;color:#8c8c8c;font-weight:normal;">1.00</div>
<div id="t135" class="t" style="left:1794.1px;top:1507.5px;height:19px;line-height:19px;font-size:19px;color:#8c8c8c;font-weight:normal;">1.25</div>
<div id="t136" class="t" style="left:1794.1px;top:1790.5px;height:19px;line-height:19px;font-size:19px;color:#8c8c8c;font-weight:normal;">1.25</div>
<div id="t137" class="t" style="left:1869.4px;top:1507.5px;height:19px;line-height:19px;font-size:19px;color:#8c8c8c;font-weight:normal;">1.50</div>
<div id="t138" class="t" style="left:1869.4px;top:1790.5px;height:19px;line-height:19px;font-size:19px;color:#8c8c8c;font-weight:normal;">1.50</div>
<div id="t139" class="t" style="left:1944.6999999999998px;top:1507.5px;height:19px;line-height:19px;font-size:19px;color:#8c8c8c;font-weight:normal;">1.75</div>
<div id="t140" class="t" style="left:1944.6999999999998px;top:1790.5px;height:19px;line-height:19px;font-size:19px;color:#8c8c8c;font-weight:normal;">1.75</div>
<div id="t141" class="t" style="left:2020.0px;top:1507.5px;height:19px;line-height:19px;font-size:19px;color:#8c8c8c;font-weight:normal;">2.00</div>
<div id="t142" class="t" style="left:2020.0px;top:1790.5px;height:19px;line-height:19px;font-size:19px;color:#8c8c8c;font-weight:normal;">2.00</div>
<div id="t143" class="t" style="left:2095.3px;top:1507.5px;height:19px;line-height:19px;font-size:19px;color:#8c8c8c;font-weight:normal;">2.25</div>
<div id="t144" class="t" style="left:2095.3px;top:1790.5px;height:19px;line-height:19px;font-size:19px;color:#8c8c8c;font-weight:normal;">2.25</div>
<div id="t145" class="t" style="left:2170.6px;top:1507.5px;height:19px;line-height:19px;font-size:19px;color:#8c8c8c;font-weight:normal;">2.50</div>
<div id="t146" class="t" style="left:2170.6px;top:1790.5px;height:19px;line-height:19px;font-size:19px;color:#8c8c8c;font-weight:normal;">2.50</div>
<div id="t147" class="t" style="left:2245.9px;top:1507.5px;height:19px;line-height:19px;font-size:19px;color:#8c8c8c;font-weight:normal;">2.75</div>
<div id="t148" class="t" style="left:2245.9px;top:1790.5px;height:19px;line-height:19px;font-size:19px;color:#8c8c8c;font-weight:normal;">2.75</div>
<div id="t149" class="t" style="left:2321.2px;top:1507.5px;height:19px;line-height:19px;font-size:19px;color:#8c8c8c;font-weight:normal;">3.00</div>
<div id="t150" class="t" style="left:2321.2px;top:1790.5px;height:19px;line-height:19px;font-size:19px;color:#8c8c8c;font-weight:normal;">3.00</div>
<div id="t151" class="t" style="left:2396.5px;top:1507.5px;height:19px;line-height:19px;font-size:19px;color:#8c8c8c;font-weight:normal;">3.25</div>
<div id="t152" class="t" style="left:2396.5px;top:1790.5px;height:19px;line-height:19px;font-size:19px;color:#8c8c8c;font-weight:normal;">3.25</div>
<div id="t153" class="t" style="left:2471.8px;top:1507.5px;height:19px;line-height:19px;font-size:19px;color:#8c8c8c;font-weight:normal;">3.50</div>
<div id="t154" class="t" style="left:2471.8px;top:1790.5px;height:19px;line-height:19px;font-size:19px;color:#8c8c8c;font-weight:normal;">3.50</div>
<div id="t155" class="t" style="left:2547.1px;top:1507.5px;height:19px;line-height:19px;font-size:19px;color:#8c8c8c;font-weight:normal;">3.75</div>
<div id="t156" class="t" style="left:2547.1px;top:1790.5px;height:19px;line-height:19px;font-size:19px;color:#8c8c8c;font-weight:normal;">3.75</div>
<div id="t157" class="t" style="left:2622.3999999999996px;top:1507.5px;height:19px;line-height:19px;font-size:19px;color:#8c8c8c;font-weight:normal;">4.00</div>
<div id="t158" class="t" style="left:2622.3999999999996px;top:1790.5px;height:19px;line-height:19px;font-size:19px;color:#8c8c8c;font-weight:normal;">4.00</div>
<div id="t159" class="t" style="left:2697.7px;top:1507.5px;height:19px;line-height:19px;font-size:19px;color:#8c8c8c;font-weight:normal;">4.25</div>
<div id="t160" class="t" style="left:2697.7px;top:1790.5px;height:19px;line-height:19px;font-size:19px;color:#8c8c8c;font-weight:normal;">4.25</div>
<div id="t161" class="t" style="left:2773.0px;top:1507.5px;height:19px;line-height:19px;font-size:19px;color:#8c8c8c;font-weight:normal;">4.50</div>
<div id="t162" class="t" style="left:2773.0px;top:1790.5px;height:19px;line-height:19px;font-size:19px;color:#8c8c8c;font-weight:normal;">4.50</div>
<div id="t163" class="t" style="left:2848.3px;top:1507.5px;height:19px;line-height:19px;font-size:19px;color:#8c8c8c;font-weight:normal;">4.75</div>
<div id="t164" class="t" style="left:2848.3px;top:1790.5px;height:19px;line-height:19px;font-size:19px;color:#8c8c8c;font-weight:normal;">4.75</div>
<div id="t165" class="t" style="left:2923.6px;top:1507.5px;height:19px;line-height:19px;font-size:19px;color:#8c8c8c;font-weight:normal;">5.00</div>
<div id="t166" class="t" style="left:2923.6px;top:1790.5px;height:19px;line-height:19px;font-size:19px;color:#8c8c8c;font-weight:normal;">5.00</div>
<div id="t167" class="t" style="left:2998.8999999999996px;top:1507.5px;height:19px;line-height:19px;font-size:19px;color:#8c8c8c;font-weight:normal;">5.25</div>
<div id="t168" class="t" style="left:2998.8999999999996px;top:1790.5px;height:19px;line-height:19px;font-size:19px;color:#8c8c8c;font-weight:normal;">5.25</div>
<div id="t169" class="t" style="left:1635px;top:1482.0px;height:22px;line-height:22px;font-size:22px;color:#f4f4f4;font-weight:normal;transform:scaleX(0.9573);transform-origin:0 50%;">0.70</div>
<div id="t170" class="t" style="left:1635px;top:1821.0px;height:22px;line-height:22px;font-size:22px;color:#f4f4f4;font-weight:normal;transform:scaleX(0.9573);transform-origin:0 50%;">0.70</div>
</body></html>
